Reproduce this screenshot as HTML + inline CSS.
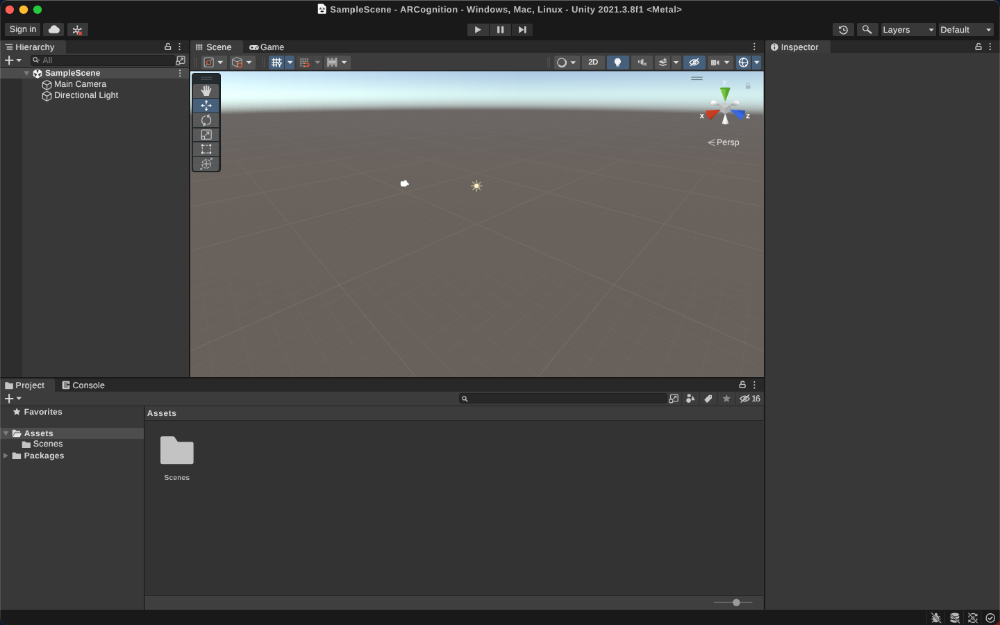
<!DOCTYPE html>
<html lang="en">
<head>
<meta charset="utf-8">
<title>SampleScene - ARCognition - Windows, Mac, Linux - Unity 2021.3.8f1 &lt;Metal&gt;</title>
<style>
*{box-sizing:border-box;margin:0;padding:0}
html,body{width:1000px;height:625px;overflow:hidden;background:#0a1930}
body{font-family:"Liberation Sans",Arial,sans-serif;position:relative;text-rendering:geometricPrecision}
#corner-br{position:absolute;right:0;bottom:0;width:10px;height:10px;background:#7c1d14}
#win{will-change:transform;position:absolute;left:0;top:0;width:1440px;height:900px;transform:scale(0.6944444);transform-origin:0 0;background:#191919;border-radius:10px;overflow:hidden}
#win>div,#win>div>div{position:absolute}
#p-hier,#p-scene,#p-insp,#p-proj{overflow:hidden}
.t{position:absolute;line-height:1;white-space:nowrap;font-size:12px;text-shadow:0 0 .7px currentColor}
.b{font-weight:bold;text-shadow:none}
#ico{position:absolute;left:0;top:0;width:1440px;height:900px;overflow:hidden}
#frame{left:0;top:0;width:1440px;height:900.7px;border:1.6px solid rgba(255,255,255,.15);border-top-color:rgba(255,255,255,.3);border-bottom-color:rgba(255,255,255,.32);border-radius:10px;pointer-events:none}
.tb{background:#383838;border-radius:2px}
.sb{background:#515151;border-radius:2px;top:80.4px;height:19.2px}
.sb.on{background:#46607c}
.sb.dim{background:#464646}
.tool{left:278.2px;width:37.2px;height:19.6px;background:#585858}
</style>
</head>
<body>
<div id="corner-br"></div>
<div id="win">

<!-- ===== main toolbar buttons ===== -->
<div class="tb" style="left:7.2px;top:33.2px;width:50.6px;height:19.2px"></div>
<div class="tb" style="left:62px;top:33.2px;width:30.4px;height:19.2px"></div>
<div class="tb" style="left:96.5px;top:33.2px;width:30.4px;height:19.2px"></div>
<div class="tb" style="left:672.8px;top:34px;width:31px;height:17.6px;border-radius:2px 0 0 2.5px"></div>
<div class="tb" style="left:705.2px;top:34px;width:30.8px;height:17.6px;border-radius:0"></div>
<div class="tb" style="left:737.4px;top:34px;width:29.8px;height:17.6px;border-radius:0 2px 2px 0;background:#2e2e2e"></div>
<div class="tb" style="left:1199px;top:33.4px;width:30.8px;height:18.8px"></div>
<div class="tb" style="left:1234px;top:33.4px;width:30.8px;height:18.8px"></div>
<div class="tb" style="left:1268.6px;top:33.4px;width:79.4px;height:18.8px"></div>
<div class="tb" style="left:1352.2px;top:33.4px;width:79.2px;height:18.8px"></div>

<!-- ===== hierarchy ===== -->
<div id="p-hier" style="left:0;top:58px;width:271.5px;height:484.5px;background:#383838">
  <div style="left:0;top:0;width:271.5px;height:18.5px;background:#282828"></div>
  <div style="left:0;top:0;width:95.3px;height:18.5px;background:#3c3c3c;border-radius:3px 3px 0 0"></div>
  <div style="left:0;top:18.5px;width:271.5px;height:20px;background:#3c3c3c"></div>
  <div style="left:0;top:38.5px;width:271.5px;height:1px;background:#242424"></div>
  <div style="left:44px;top:21.2px;width:208.6px;height:15.4px;background:#262626;border:1px solid #1d1d1d;border-radius:3.5px"></div>
  <div style="left:0;top:39.5px;width:31.6px;height:445px;background:#2d2d2d"></div>
  <div style="left:0;top:39.5px;width:271.5px;height:15.2px;background:#4c4c4c"></div>
</div>

<!-- ===== scene ===== -->
<div id="p-scene" style="left:274px;top:58px;width:825.5px;height:484.7px;background:#3c3c3c">
  <div style="left:0;top:0;width:825.5px;height:18.2px;background:#282828"></div>
  <div style="left:0;top:0;width:76.2px;height:18.2px;background:#3c3c3c;border-radius:3px 3px 0 0"></div>
  <div style="left:0;top:43.4px;width:825.5px;height:1.6px;background:#282828"></div>
  <div id="view" style="left:0;top:45px;width:825.5px;height:439.7px;background:linear-gradient(#6b6563 0,#6b6563 78px,#6a635e 140px,#69615b 270px,#68605a 100%)"></div>
</div>
<svg id="skysvg" viewBox="0 0 1000 625" style="position:absolute;left:0;top:0;width:1440px;height:900px;overflow:hidden">
<defs><clipPath id="vclip"><rect x="190.3" y="71.2" width="573.2" height="305.7"/></clipPath></defs>
<!-- sky: per-column gradients (skybox elevation curves + sun halo) -->
<defs>
<linearGradient id="sky" gradientUnits="userSpaceOnUse" x1="0" x2="0" y1="71.2" y2="110.6">
<stop offset="0.000" stop-color="#acc9e4"/>
<stop offset="0.173" stop-color="#b5d2e7"/>
<stop offset="0.376" stop-color="#c5e2ec"/>
<stop offset="0.566" stop-color="#d4f0f0"/>
<stop offset="0.655" stop-color="#d1ebeb"/>
<stop offset="0.723" stop-color="#cbe2e2"/>
<stop offset="0.782" stop-color="#c1d3d2"/>
<stop offset="0.830" stop-color="#b6c5c4"/>
<stop offset="0.868" stop-color="#aab5b4"/>
<stop offset="0.901" stop-color="#9ca3a2"/>
<stop offset="0.929" stop-color="#8d918f"/>
<stop offset="0.954" stop-color="#7f7f7d"/>
<stop offset="0.977" stop-color="#73706d"/>
<stop offset="1.000" stop-color="#6b6563"/>
</linearGradient>
<linearGradient id="h0" gradientUnits="userSpaceOnUse" x1="0" x2="0" y1="64.66" y2="115.99"><stop offset="0.000" stop-color="#c9e6fb"/><stop offset="0.173" stop-color="#d2effe"/><stop offset="0.376" stop-color="#e2ffff"/><stop offset="0.566" stop-color="#f1ffff"/><stop offset="0.655" stop-color="#ecffff"/><stop offset="0.723" stop-color="#e0f7f3"/><stop offset="0.782" stop-color="#d2e4e0"/><stop offset="0.830" stop-color="#c3d2cf"/><stop offset="0.868" stop-color="#b4bfbc"/><stop offset="0.901" stop-color="#a4aba8"/><stop offset="0.929" stop-color="#939793"/><stop offset="0.954" stop-color="#838380"/><stop offset="0.977" stop-color="#75726e"/><stop offset="1.000" stop-color="#6b6563"/></linearGradient>
<linearGradient id="h1" gradientUnits="userSpaceOnUse" x1="0" x2="0" y1="64.91" y2="115.79"><stop offset="0.000" stop-color="#c8e5fb"/><stop offset="0.173" stop-color="#d1eefe"/><stop offset="0.376" stop-color="#e1feff"/><stop offset="0.566" stop-color="#f0ffff"/><stop offset="0.655" stop-color="#ebffff"/><stop offset="0.723" stop-color="#e0f7f3"/><stop offset="0.782" stop-color="#d2e4df"/><stop offset="0.830" stop-color="#c3d2ce"/><stop offset="0.868" stop-color="#b4bfbc"/><stop offset="0.901" stop-color="#a4aba8"/><stop offset="0.929" stop-color="#929693"/><stop offset="0.954" stop-color="#828280"/><stop offset="0.977" stop-color="#75726e"/><stop offset="1.000" stop-color="#6b6563"/></linearGradient>
<linearGradient id="h2" gradientUnits="userSpaceOnUse" x1="0" x2="0" y1="65.15" y2="115.59"><stop offset="0.000" stop-color="#c8e5fa"/><stop offset="0.173" stop-color="#d1eefd"/><stop offset="0.376" stop-color="#e1feff"/><stop offset="0.566" stop-color="#f0ffff"/><stop offset="0.655" stop-color="#ebffff"/><stop offset="0.723" stop-color="#e0f7f3"/><stop offset="0.782" stop-color="#d1e3df"/><stop offset="0.830" stop-color="#c3d2ce"/><stop offset="0.868" stop-color="#b4bfbc"/><stop offset="0.901" stop-color="#a3aaa8"/><stop offset="0.929" stop-color="#929693"/><stop offset="0.954" stop-color="#828280"/><stop offset="0.977" stop-color="#75726e"/><stop offset="1.000" stop-color="#6b6563"/></linearGradient>
<linearGradient id="h3" gradientUnits="userSpaceOnUse" x1="0" x2="0" y1="65.38" y2="115.39"><stop offset="0.000" stop-color="#c7e4fa"/><stop offset="0.173" stop-color="#d0edfd"/><stop offset="0.376" stop-color="#e0fdff"/><stop offset="0.566" stop-color="#efffff"/><stop offset="0.655" stop-color="#eaffff"/><stop offset="0.723" stop-color="#dff6f2"/><stop offset="0.782" stop-color="#d1e3df"/><stop offset="0.830" stop-color="#c2d1ce"/><stop offset="0.868" stop-color="#b4bfbc"/><stop offset="0.901" stop-color="#a3aaa8"/><stop offset="0.929" stop-color="#929693"/><stop offset="0.954" stop-color="#828280"/><stop offset="0.977" stop-color="#75726e"/><stop offset="1.000" stop-color="#6b6563"/></linearGradient>
<linearGradient id="h4" gradientUnits="userSpaceOnUse" x1="0" x2="0" y1="65.62" y2="115.20"><stop offset="0.000" stop-color="#c7e4f9"/><stop offset="0.173" stop-color="#d0edfc"/><stop offset="0.376" stop-color="#e0fdff"/><stop offset="0.566" stop-color="#efffff"/><stop offset="0.655" stop-color="#eaffff"/><stop offset="0.723" stop-color="#dff6f2"/><stop offset="0.782" stop-color="#d1e3df"/><stop offset="0.830" stop-color="#c2d1ce"/><stop offset="0.868" stop-color="#b3bebc"/><stop offset="0.901" stop-color="#a3aaa8"/><stop offset="0.929" stop-color="#929693"/><stop offset="0.954" stop-color="#828280"/><stop offset="0.977" stop-color="#75726e"/><stop offset="1.000" stop-color="#6b6563"/></linearGradient>
<linearGradient id="h5" gradientUnits="userSpaceOnUse" x1="0" x2="0" y1="65.85" y2="115.01"><stop offset="0.000" stop-color="#c6e3f9"/><stop offset="0.173" stop-color="#cfecfc"/><stop offset="0.376" stop-color="#dffcff"/><stop offset="0.566" stop-color="#eeffff"/><stop offset="0.655" stop-color="#e9fffe"/><stop offset="0.723" stop-color="#dff6f2"/><stop offset="0.782" stop-color="#d0e2de"/><stop offset="0.830" stop-color="#c2d1ce"/><stop offset="0.868" stop-color="#b3bebb"/><stop offset="0.901" stop-color="#a3aaa8"/><stop offset="0.929" stop-color="#929693"/><stop offset="0.954" stop-color="#828280"/><stop offset="0.977" stop-color="#75726e"/><stop offset="1.000" stop-color="#6b6563"/></linearGradient>
<linearGradient id="h6" gradientUnits="userSpaceOnUse" x1="0" x2="0" y1="66.07" y2="114.83"><stop offset="0.000" stop-color="#c6e3f8"/><stop offset="0.173" stop-color="#cfecfb"/><stop offset="0.376" stop-color="#dffcff"/><stop offset="0.566" stop-color="#eeffff"/><stop offset="0.655" stop-color="#e9fffe"/><stop offset="0.723" stop-color="#def5f1"/><stop offset="0.782" stop-color="#d0e2de"/><stop offset="0.830" stop-color="#c2d1cd"/><stop offset="0.868" stop-color="#b3bebb"/><stop offset="0.901" stop-color="#a3aaa7"/><stop offset="0.929" stop-color="#929693"/><stop offset="0.954" stop-color="#828280"/><stop offset="0.977" stop-color="#75726e"/><stop offset="1.000" stop-color="#6b6563"/></linearGradient>
<linearGradient id="h7" gradientUnits="userSpaceOnUse" x1="0" x2="0" y1="66.29" y2="114.64"><stop offset="0.000" stop-color="#c5e2f8"/><stop offset="0.173" stop-color="#ceebfb"/><stop offset="0.376" stop-color="#defbff"/><stop offset="0.566" stop-color="#edffff"/><stop offset="0.655" stop-color="#e8fffe"/><stop offset="0.723" stop-color="#def5f1"/><stop offset="0.782" stop-color="#d0e2de"/><stop offset="0.830" stop-color="#c2d1cd"/><stop offset="0.868" stop-color="#b3bebb"/><stop offset="0.901" stop-color="#a3aaa7"/><stop offset="0.929" stop-color="#929693"/><stop offset="0.954" stop-color="#82827f"/><stop offset="0.977" stop-color="#75726e"/><stop offset="1.000" stop-color="#6b6563"/></linearGradient>
<linearGradient id="h8" gradientUnits="userSpaceOnUse" x1="0" x2="0" y1="66.51" y2="114.46"><stop offset="0.000" stop-color="#c5e2f8"/><stop offset="0.173" stop-color="#ceebfb"/><stop offset="0.376" stop-color="#defbff"/><stop offset="0.566" stop-color="#edffff"/><stop offset="0.655" stop-color="#e8fffd"/><stop offset="0.723" stop-color="#ddf4f1"/><stop offset="0.782" stop-color="#cfe1de"/><stop offset="0.830" stop-color="#c1d0cd"/><stop offset="0.868" stop-color="#b3bebb"/><stop offset="0.901" stop-color="#a3aaa7"/><stop offset="0.929" stop-color="#929693"/><stop offset="0.954" stop-color="#82827f"/><stop offset="0.977" stop-color="#75726e"/><stop offset="1.000" stop-color="#6b6563"/></linearGradient>
<linearGradient id="h9" gradientUnits="userSpaceOnUse" x1="0" x2="0" y1="66.73" y2="114.28"><stop offset="0.000" stop-color="#c4e1f7"/><stop offset="0.173" stop-color="#cdeafa"/><stop offset="0.376" stop-color="#ddfaff"/><stop offset="0.566" stop-color="#ecffff"/><stop offset="0.655" stop-color="#e7fffd"/><stop offset="0.723" stop-color="#ddf4f0"/><stop offset="0.782" stop-color="#cfe1dd"/><stop offset="0.830" stop-color="#c1d0cd"/><stop offset="0.868" stop-color="#b3bebb"/><stop offset="0.901" stop-color="#a2a9a7"/><stop offset="0.929" stop-color="#929693"/><stop offset="0.954" stop-color="#82827f"/><stop offset="0.977" stop-color="#74716e"/><stop offset="1.000" stop-color="#6b6563"/></linearGradient>
<linearGradient id="h10" gradientUnits="userSpaceOnUse" x1="0" x2="0" y1="66.94" y2="114.11"><stop offset="0.000" stop-color="#c4e1f7"/><stop offset="0.173" stop-color="#cdeafa"/><stop offset="0.376" stop-color="#ddfaff"/><stop offset="0.566" stop-color="#ecffff"/><stop offset="0.655" stop-color="#e7fffd"/><stop offset="0.723" stop-color="#ddf4f0"/><stop offset="0.782" stop-color="#cfe1dd"/><stop offset="0.830" stop-color="#c1d0cd"/><stop offset="0.868" stop-color="#b2bdbb"/><stop offset="0.901" stop-color="#a2a9a7"/><stop offset="0.929" stop-color="#929693"/><stop offset="0.954" stop-color="#82827f"/><stop offset="0.977" stop-color="#74716e"/><stop offset="1.000" stop-color="#6b6563"/></linearGradient>
<linearGradient id="h11" gradientUnits="userSpaceOnUse" x1="0" x2="0" y1="67.15" y2="113.94"><stop offset="0.000" stop-color="#c3e0f7"/><stop offset="0.173" stop-color="#cce9fa"/><stop offset="0.376" stop-color="#dcf9ff"/><stop offset="0.566" stop-color="#ebffff"/><stop offset="0.655" stop-color="#e7fffc"/><stop offset="0.723" stop-color="#dcf3f0"/><stop offset="0.782" stop-color="#cfe1dd"/><stop offset="0.830" stop-color="#c1d0cd"/><stop offset="0.868" stop-color="#b2bdbb"/><stop offset="0.901" stop-color="#a2a9a7"/><stop offset="0.929" stop-color="#919593"/><stop offset="0.954" stop-color="#82827f"/><stop offset="0.977" stop-color="#74716e"/><stop offset="1.000" stop-color="#6b6563"/></linearGradient>
<linearGradient id="h12" gradientUnits="userSpaceOnUse" x1="0" x2="0" y1="67.35" y2="113.77"><stop offset="0.000" stop-color="#c3e0f6"/><stop offset="0.173" stop-color="#cce9f9"/><stop offset="0.376" stop-color="#dcf9fe"/><stop offset="0.566" stop-color="#ebffff"/><stop offset="0.655" stop-color="#e6fffc"/><stop offset="0.723" stop-color="#dcf3f0"/><stop offset="0.782" stop-color="#cee0dd"/><stop offset="0.830" stop-color="#c0cfcc"/><stop offset="0.868" stop-color="#b2bdba"/><stop offset="0.901" stop-color="#a2a9a7"/><stop offset="0.929" stop-color="#919592"/><stop offset="0.954" stop-color="#82827f"/><stop offset="0.977" stop-color="#74716e"/><stop offset="1.000" stop-color="#6b6563"/></linearGradient>
<linearGradient id="h13" gradientUnits="userSpaceOnUse" x1="0" x2="0" y1="67.55" y2="113.61"><stop offset="0.000" stop-color="#c2dff6"/><stop offset="0.173" stop-color="#cbe8f9"/><stop offset="0.376" stop-color="#dbf8fe"/><stop offset="0.566" stop-color="#eaffff"/><stop offset="0.655" stop-color="#e6fffc"/><stop offset="0.723" stop-color="#dcf3ef"/><stop offset="0.782" stop-color="#cee0dd"/><stop offset="0.830" stop-color="#c0cfcc"/><stop offset="0.868" stop-color="#b2bdba"/><stop offset="0.901" stop-color="#a2a9a7"/><stop offset="0.929" stop-color="#919592"/><stop offset="0.954" stop-color="#82827f"/><stop offset="0.977" stop-color="#74716e"/><stop offset="1.000" stop-color="#6b6563"/></linearGradient>
<linearGradient id="h14" gradientUnits="userSpaceOnUse" x1="0" x2="0" y1="67.75" y2="113.45"><stop offset="0.000" stop-color="#c2dff5"/><stop offset="0.173" stop-color="#cbe8f8"/><stop offset="0.376" stop-color="#dbf8fd"/><stop offset="0.566" stop-color="#eaffff"/><stop offset="0.655" stop-color="#e5fffb"/><stop offset="0.723" stop-color="#dbf2ef"/><stop offset="0.782" stop-color="#cee0dc"/><stop offset="0.830" stop-color="#c0cfcc"/><stop offset="0.868" stop-color="#b2bdba"/><stop offset="0.901" stop-color="#a2a9a7"/><stop offset="0.929" stop-color="#919592"/><stop offset="0.954" stop-color="#82827f"/><stop offset="0.977" stop-color="#74716e"/><stop offset="1.000" stop-color="#6b6563"/></linearGradient>
<linearGradient id="h15" gradientUnits="userSpaceOnUse" x1="0" x2="0" y1="67.94" y2="113.29"><stop offset="0.000" stop-color="#c1def5"/><stop offset="0.173" stop-color="#cae7f8"/><stop offset="0.376" stop-color="#daf7fd"/><stop offset="0.566" stop-color="#e9ffff"/><stop offset="0.655" stop-color="#e5fffb"/><stop offset="0.723" stop-color="#dbf2ef"/><stop offset="0.782" stop-color="#cee0dc"/><stop offset="0.830" stop-color="#c0cfcc"/><stop offset="0.868" stop-color="#b2bdba"/><stop offset="0.901" stop-color="#a2a9a7"/><stop offset="0.929" stop-color="#919592"/><stop offset="0.954" stop-color="#82827f"/><stop offset="0.977" stop-color="#74716e"/><stop offset="1.000" stop-color="#6b6563"/></linearGradient>
<linearGradient id="h16" gradientUnits="userSpaceOnUse" x1="0" x2="0" y1="68.12" y2="113.13"><stop offset="0.000" stop-color="#c1def5"/><stop offset="0.173" stop-color="#cae7f8"/><stop offset="0.376" stop-color="#daf7fd"/><stop offset="0.566" stop-color="#e9ffff"/><stop offset="0.655" stop-color="#e4fefb"/><stop offset="0.723" stop-color="#dbf2ee"/><stop offset="0.782" stop-color="#cddfdc"/><stop offset="0.830" stop-color="#c0cfcc"/><stop offset="0.868" stop-color="#b1bcba"/><stop offset="0.901" stop-color="#a2a9a6"/><stop offset="0.929" stop-color="#919592"/><stop offset="0.954" stop-color="#82827f"/><stop offset="0.977" stop-color="#74716e"/><stop offset="1.000" stop-color="#6b6563"/></linearGradient>
<linearGradient id="h17" gradientUnits="userSpaceOnUse" x1="0" x2="0" y1="68.31" y2="112.98"><stop offset="0.000" stop-color="#c0ddf4"/><stop offset="0.173" stop-color="#c9e6f7"/><stop offset="0.376" stop-color="#d9f6fc"/><stop offset="0.566" stop-color="#e8ffff"/><stop offset="0.655" stop-color="#e4fefa"/><stop offset="0.723" stop-color="#daf1ee"/><stop offset="0.782" stop-color="#cddfdc"/><stop offset="0.830" stop-color="#bfcecc"/><stop offset="0.868" stop-color="#b1bcba"/><stop offset="0.901" stop-color="#a1a8a6"/><stop offset="0.929" stop-color="#919592"/><stop offset="0.954" stop-color="#82827f"/><stop offset="0.977" stop-color="#74716e"/><stop offset="1.000" stop-color="#6b6563"/></linearGradient>
<linearGradient id="h18" gradientUnits="userSpaceOnUse" x1="0" x2="0" y1="68.48" y2="112.84"><stop offset="0.000" stop-color="#c0ddf4"/><stop offset="0.173" stop-color="#c9e6f7"/><stop offset="0.376" stop-color="#d9f6fc"/><stop offset="0.566" stop-color="#e8ffff"/><stop offset="0.655" stop-color="#e4fefa"/><stop offset="0.723" stop-color="#daf1ee"/><stop offset="0.782" stop-color="#cddfdb"/><stop offset="0.830" stop-color="#bfcecb"/><stop offset="0.868" stop-color="#b1bcba"/><stop offset="0.901" stop-color="#a1a8a6"/><stop offset="0.929" stop-color="#919592"/><stop offset="0.954" stop-color="#81817f"/><stop offset="0.977" stop-color="#74716e"/><stop offset="1.000" stop-color="#6b6563"/></linearGradient>
<linearGradient id="h19" gradientUnits="userSpaceOnUse" x1="0" x2="0" y1="68.66" y2="112.70"><stop offset="0.000" stop-color="#c0ddf4"/><stop offset="0.173" stop-color="#c9e6f7"/><stop offset="0.376" stop-color="#d9f6fc"/><stop offset="0.566" stop-color="#e8ffff"/><stop offset="0.655" stop-color="#e3fdfa"/><stop offset="0.723" stop-color="#daf1ee"/><stop offset="0.782" stop-color="#cddfdb"/><stop offset="0.830" stop-color="#bfcecb"/><stop offset="0.868" stop-color="#b1bcba"/><stop offset="0.901" stop-color="#a1a8a6"/><stop offset="0.929" stop-color="#919592"/><stop offset="0.954" stop-color="#81817f"/><stop offset="0.977" stop-color="#74716e"/><stop offset="1.000" stop-color="#6b6563"/></linearGradient>
<linearGradient id="h20" gradientUnits="userSpaceOnUse" x1="0" x2="0" y1="68.82" y2="112.56"><stop offset="0.000" stop-color="#bfdcf3"/><stop offset="0.173" stop-color="#c8e5f6"/><stop offset="0.376" stop-color="#d8f5fb"/><stop offset="0.566" stop-color="#e7ffff"/><stop offset="0.655" stop-color="#e3fdf9"/><stop offset="0.723" stop-color="#d9f0ed"/><stop offset="0.782" stop-color="#ccdedb"/><stop offset="0.830" stop-color="#bfcecb"/><stop offset="0.868" stop-color="#b1bcb9"/><stop offset="0.901" stop-color="#a1a8a6"/><stop offset="0.929" stop-color="#919592"/><stop offset="0.954" stop-color="#81817f"/><stop offset="0.977" stop-color="#74716e"/><stop offset="1.000" stop-color="#6b6563"/></linearGradient>
<linearGradient id="h21" gradientUnits="userSpaceOnUse" x1="0" x2="0" y1="68.99" y2="112.42"><stop offset="0.000" stop-color="#bfdcf3"/><stop offset="0.173" stop-color="#c8e5f6"/><stop offset="0.376" stop-color="#d8f5fb"/><stop offset="0.566" stop-color="#e7ffff"/><stop offset="0.655" stop-color="#e2fcf9"/><stop offset="0.723" stop-color="#d9f0ed"/><stop offset="0.782" stop-color="#ccdedb"/><stop offset="0.830" stop-color="#bfcecb"/><stop offset="0.868" stop-color="#b1bcb9"/><stop offset="0.901" stop-color="#a1a8a6"/><stop offset="0.929" stop-color="#919592"/><stop offset="0.954" stop-color="#81817f"/><stop offset="0.977" stop-color="#74716e"/><stop offset="1.000" stop-color="#6b6563"/></linearGradient>
<linearGradient id="h22" gradientUnits="userSpaceOnUse" x1="0" x2="0" y1="69.14" y2="112.29"><stop offset="0.000" stop-color="#bedbf3"/><stop offset="0.173" stop-color="#c7e4f6"/><stop offset="0.376" stop-color="#d7f4fb"/><stop offset="0.566" stop-color="#e6ffff"/><stop offset="0.655" stop-color="#e2fcf9"/><stop offset="0.723" stop-color="#d9f0ed"/><stop offset="0.782" stop-color="#ccdedb"/><stop offset="0.830" stop-color="#becdcb"/><stop offset="0.868" stop-color="#b0bbb9"/><stop offset="0.901" stop-color="#a1a8a6"/><stop offset="0.929" stop-color="#909492"/><stop offset="0.954" stop-color="#81817f"/><stop offset="0.977" stop-color="#74716e"/><stop offset="1.000" stop-color="#6b6563"/></linearGradient>
<linearGradient id="h23" gradientUnits="userSpaceOnUse" x1="0" x2="0" y1="69.30" y2="112.17"><stop offset="0.000" stop-color="#bedbf2"/><stop offset="0.173" stop-color="#c7e4f5"/><stop offset="0.376" stop-color="#d7f4fa"/><stop offset="0.566" stop-color="#e6fffe"/><stop offset="0.655" stop-color="#e1fbf8"/><stop offset="0.723" stop-color="#d8efed"/><stop offset="0.782" stop-color="#cbddda"/><stop offset="0.830" stop-color="#becdca"/><stop offset="0.868" stop-color="#b0bbb9"/><stop offset="0.901" stop-color="#a1a8a6"/><stop offset="0.929" stop-color="#909492"/><stop offset="0.954" stop-color="#81817f"/><stop offset="0.977" stop-color="#74716e"/><stop offset="1.000" stop-color="#6b6563"/></linearGradient>
<linearGradient id="h24" gradientUnits="userSpaceOnUse" x1="0" x2="0" y1="69.45" y2="112.05"><stop offset="0.000" stop-color="#bddaf2"/><stop offset="0.173" stop-color="#c6e3f5"/><stop offset="0.376" stop-color="#d6f3fa"/><stop offset="0.566" stop-color="#e5fffe"/><stop offset="0.655" stop-color="#e1fbf8"/><stop offset="0.723" stop-color="#d8efec"/><stop offset="0.782" stop-color="#cbddda"/><stop offset="0.830" stop-color="#becdca"/><stop offset="0.868" stop-color="#b0bbb9"/><stop offset="0.901" stop-color="#a1a8a6"/><stop offset="0.929" stop-color="#909492"/><stop offset="0.954" stop-color="#81817f"/><stop offset="0.977" stop-color="#74716e"/><stop offset="1.000" stop-color="#6b6563"/></linearGradient>
<linearGradient id="h25" gradientUnits="userSpaceOnUse" x1="0" x2="0" y1="69.59" y2="111.93"><stop offset="0.000" stop-color="#bddaf1"/><stop offset="0.173" stop-color="#c6e3f4"/><stop offset="0.376" stop-color="#d6f3f9"/><stop offset="0.566" stop-color="#e5fffd"/><stop offset="0.655" stop-color="#e1fbf7"/><stop offset="0.723" stop-color="#d7eeec"/><stop offset="0.782" stop-color="#cbddda"/><stop offset="0.830" stop-color="#becdca"/><stop offset="0.868" stop-color="#b0bbb9"/><stop offset="0.901" stop-color="#a0a7a6"/><stop offset="0.929" stop-color="#909492"/><stop offset="0.954" stop-color="#81817f"/><stop offset="0.977" stop-color="#74716e"/><stop offset="1.000" stop-color="#6b6563"/></linearGradient>
<linearGradient id="h26" gradientUnits="userSpaceOnUse" x1="0" x2="0" y1="69.72" y2="111.82"><stop offset="0.000" stop-color="#bcd9f1"/><stop offset="0.173" stop-color="#c5e2f4"/><stop offset="0.376" stop-color="#d5f2f9"/><stop offset="0.566" stop-color="#e4fffd"/><stop offset="0.655" stop-color="#e0faf7"/><stop offset="0.723" stop-color="#d7eeec"/><stop offset="0.782" stop-color="#cadcda"/><stop offset="0.830" stop-color="#bdccca"/><stop offset="0.868" stop-color="#b0bbb9"/><stop offset="0.901" stop-color="#a0a7a5"/><stop offset="0.929" stop-color="#909491"/><stop offset="0.954" stop-color="#81817f"/><stop offset="0.977" stop-color="#74716e"/><stop offset="1.000" stop-color="#6b6563"/></linearGradient>
<linearGradient id="h27" gradientUnits="userSpaceOnUse" x1="0" x2="0" y1="69.86" y2="111.71"><stop offset="0.000" stop-color="#bcd8f0"/><stop offset="0.173" stop-color="#c4e2f3"/><stop offset="0.376" stop-color="#d4f2f8"/><stop offset="0.566" stop-color="#e4fffc"/><stop offset="0.655" stop-color="#dff9f7"/><stop offset="0.723" stop-color="#d7eeeb"/><stop offset="0.782" stop-color="#cadcd9"/><stop offset="0.830" stop-color="#bdccca"/><stop offset="0.868" stop-color="#b0bbb8"/><stop offset="0.901" stop-color="#a0a7a5"/><stop offset="0.929" stop-color="#909491"/><stop offset="0.954" stop-color="#81817f"/><stop offset="0.977" stop-color="#74716e"/><stop offset="1.000" stop-color="#6b6563"/></linearGradient>
<linearGradient id="h28" gradientUnits="userSpaceOnUse" x1="0" x2="0" y1="69.98" y2="111.60"><stop offset="0.000" stop-color="#bbd8f0"/><stop offset="0.173" stop-color="#c4e1f3"/><stop offset="0.376" stop-color="#d4f1f8"/><stop offset="0.566" stop-color="#e3fffc"/><stop offset="0.655" stop-color="#dff9f6"/><stop offset="0.723" stop-color="#d6edeb"/><stop offset="0.782" stop-color="#cadcd9"/><stop offset="0.830" stop-color="#bdccc9"/><stop offset="0.868" stop-color="#afbab8"/><stop offset="0.901" stop-color="#a0a7a5"/><stop offset="0.929" stop-color="#909491"/><stop offset="0.954" stop-color="#81817e"/><stop offset="0.977" stop-color="#74716e"/><stop offset="1.000" stop-color="#6b6563"/></linearGradient>
<linearGradient id="h29" gradientUnits="userSpaceOnUse" x1="0" x2="0" y1="70.10" y2="111.51"><stop offset="0.000" stop-color="#bad7ef"/><stop offset="0.173" stop-color="#c3e0f2"/><stop offset="0.376" stop-color="#d3f0f7"/><stop offset="0.566" stop-color="#e2fefb"/><stop offset="0.655" stop-color="#def8f6"/><stop offset="0.723" stop-color="#d6edeb"/><stop offset="0.782" stop-color="#c9dbd9"/><stop offset="0.830" stop-color="#bdccc9"/><stop offset="0.868" stop-color="#afbab8"/><stop offset="0.901" stop-color="#a0a7a5"/><stop offset="0.929" stop-color="#909491"/><stop offset="0.954" stop-color="#81817e"/><stop offset="0.977" stop-color="#74716e"/><stop offset="1.000" stop-color="#6b6563"/></linearGradient>
<linearGradient id="h30" gradientUnits="userSpaceOnUse" x1="0" x2="0" y1="70.22" y2="111.41"><stop offset="0.000" stop-color="#bad7ef"/><stop offset="0.173" stop-color="#c3e0f2"/><stop offset="0.376" stop-color="#d3f0f7"/><stop offset="0.566" stop-color="#e2fefb"/><stop offset="0.655" stop-color="#def8f5"/><stop offset="0.723" stop-color="#d5ecea"/><stop offset="0.782" stop-color="#c9dbd8"/><stop offset="0.830" stop-color="#bccbc9"/><stop offset="0.868" stop-color="#afbab8"/><stop offset="0.901" stop-color="#a0a7a5"/><stop offset="0.929" stop-color="#909491"/><stop offset="0.954" stop-color="#81817e"/><stop offset="0.977" stop-color="#74716e"/><stop offset="1.000" stop-color="#6b6563"/></linearGradient>
<linearGradient id="h31" gradientUnits="userSpaceOnUse" x1="0" x2="0" y1="70.32" y2="111.32"><stop offset="0.000" stop-color="#b9d6ee"/><stop offset="0.173" stop-color="#c2dff1"/><stop offset="0.376" stop-color="#d2eff6"/><stop offset="0.566" stop-color="#e1fdfa"/><stop offset="0.655" stop-color="#ddf7f5"/><stop offset="0.723" stop-color="#d5ecea"/><stop offset="0.782" stop-color="#c9dbd8"/><stop offset="0.830" stop-color="#bccbc9"/><stop offset="0.868" stop-color="#afbab8"/><stop offset="0.901" stop-color="#9fa6a5"/><stop offset="0.929" stop-color="#909491"/><stop offset="0.954" stop-color="#81817e"/><stop offset="0.977" stop-color="#74716e"/><stop offset="1.000" stop-color="#6b6563"/></linearGradient>
<linearGradient id="h32" gradientUnits="userSpaceOnUse" x1="0" x2="0" y1="70.43" y2="111.24"><stop offset="0.000" stop-color="#b8d6ee"/><stop offset="0.173" stop-color="#c2def1"/><stop offset="0.376" stop-color="#d2eef6"/><stop offset="0.566" stop-color="#e0fcfa"/><stop offset="0.655" stop-color="#ddf7f4"/><stop offset="0.723" stop-color="#d4ebe9"/><stop offset="0.782" stop-color="#c8dad8"/><stop offset="0.830" stop-color="#bccbc9"/><stop offset="0.868" stop-color="#aeb9b8"/><stop offset="0.901" stop-color="#9fa6a5"/><stop offset="0.929" stop-color="#8f9391"/><stop offset="0.954" stop-color="#81817e"/><stop offset="0.977" stop-color="#74716e"/><stop offset="1.000" stop-color="#6b6563"/></linearGradient>
<linearGradient id="h33" gradientUnits="userSpaceOnUse" x1="0" x2="0" y1="70.52" y2="111.16"><stop offset="0.000" stop-color="#b8d5ee"/><stop offset="0.173" stop-color="#c1def1"/><stop offset="0.376" stop-color="#d1eef6"/><stop offset="0.566" stop-color="#e0fcfa"/><stop offset="0.655" stop-color="#dcf6f4"/><stop offset="0.723" stop-color="#d4ebe9"/><stop offset="0.782" stop-color="#c8dad8"/><stop offset="0.830" stop-color="#bbcac8"/><stop offset="0.868" stop-color="#aeb9b7"/><stop offset="0.901" stop-color="#9fa6a5"/><stop offset="0.929" stop-color="#8f9391"/><stop offset="0.954" stop-color="#80807e"/><stop offset="0.977" stop-color="#74716e"/><stop offset="1.000" stop-color="#6b6563"/></linearGradient>
<linearGradient id="h34" gradientUnits="userSpaceOnUse" x1="0" x2="0" y1="70.61" y2="111.08"><stop offset="0.000" stop-color="#b7d4ed"/><stop offset="0.173" stop-color="#c0ddf0"/><stop offset="0.376" stop-color="#d0edf5"/><stop offset="0.566" stop-color="#dffbf9"/><stop offset="0.655" stop-color="#dcf6f3"/><stop offset="0.723" stop-color="#d3eae9"/><stop offset="0.782" stop-color="#c8dad7"/><stop offset="0.830" stop-color="#bbcac8"/><stop offset="0.868" stop-color="#aeb9b7"/><stop offset="0.901" stop-color="#9fa6a4"/><stop offset="0.929" stop-color="#8f9391"/><stop offset="0.954" stop-color="#80807e"/><stop offset="0.977" stop-color="#74716e"/><stop offset="1.000" stop-color="#6b6563"/></linearGradient>
<linearGradient id="h35" gradientUnits="userSpaceOnUse" x1="0" x2="0" y1="70.70" y2="111.01"><stop offset="0.000" stop-color="#b7d4ed"/><stop offset="0.173" stop-color="#c0ddf0"/><stop offset="0.376" stop-color="#d0edf5"/><stop offset="0.566" stop-color="#dffbf9"/><stop offset="0.655" stop-color="#dbf5f3"/><stop offset="0.723" stop-color="#d3eae8"/><stop offset="0.782" stop-color="#c7d9d7"/><stop offset="0.830" stop-color="#bbcac8"/><stop offset="0.868" stop-color="#aeb9b7"/><stop offset="0.901" stop-color="#9fa6a4"/><stop offset="0.929" stop-color="#8f9391"/><stop offset="0.954" stop-color="#80807e"/><stop offset="0.977" stop-color="#74716e"/><stop offset="1.000" stop-color="#6b6563"/></linearGradient>
<linearGradient id="h36" gradientUnits="userSpaceOnUse" x1="0" x2="0" y1="70.77" y2="110.95"><stop offset="0.000" stop-color="#b6d3ec"/><stop offset="0.173" stop-color="#bfdcef"/><stop offset="0.376" stop-color="#cfecf4"/><stop offset="0.566" stop-color="#defaf8"/><stop offset="0.655" stop-color="#daf4f3"/><stop offset="0.723" stop-color="#d3eae8"/><stop offset="0.782" stop-color="#c7d9d7"/><stop offset="0.830" stop-color="#bbcac8"/><stop offset="0.868" stop-color="#aeb9b7"/><stop offset="0.901" stop-color="#9fa6a4"/><stop offset="0.929" stop-color="#8f9391"/><stop offset="0.954" stop-color="#80807e"/><stop offset="0.977" stop-color="#74716d"/><stop offset="1.000" stop-color="#6b6563"/></linearGradient>
<linearGradient id="h37" gradientUnits="userSpaceOnUse" x1="0" x2="0" y1="70.85" y2="110.89"><stop offset="0.000" stop-color="#b6d2ec"/><stop offset="0.173" stop-color="#bedcef"/><stop offset="0.376" stop-color="#ceecf4"/><stop offset="0.566" stop-color="#defaf8"/><stop offset="0.655" stop-color="#daf4f2"/><stop offset="0.723" stop-color="#d2e9e8"/><stop offset="0.782" stop-color="#c7d9d6"/><stop offset="0.830" stop-color="#bac9c7"/><stop offset="0.868" stop-color="#adb8b7"/><stop offset="0.901" stop-color="#9fa6a4"/><stop offset="0.929" stop-color="#8f9390"/><stop offset="0.954" stop-color="#80807e"/><stop offset="0.977" stop-color="#74716d"/><stop offset="1.000" stop-color="#6b6563"/></linearGradient>
<linearGradient id="h38" gradientUnits="userSpaceOnUse" x1="0" x2="0" y1="70.91" y2="110.84"><stop offset="0.000" stop-color="#b5d2eb"/><stop offset="0.173" stop-color="#bedbee"/><stop offset="0.376" stop-color="#ceebf3"/><stop offset="0.566" stop-color="#ddf9f7"/><stop offset="0.655" stop-color="#d9f3f2"/><stop offset="0.723" stop-color="#d2e9e7"/><stop offset="0.782" stop-color="#c6d8d6"/><stop offset="0.830" stop-color="#bac9c7"/><stop offset="0.868" stop-color="#adb8b7"/><stop offset="0.901" stop-color="#9ea5a4"/><stop offset="0.929" stop-color="#8f9390"/><stop offset="0.954" stop-color="#80807e"/><stop offset="0.977" stop-color="#74716d"/><stop offset="1.000" stop-color="#6b6563"/></linearGradient>
<linearGradient id="h39" gradientUnits="userSpaceOnUse" x1="0" x2="0" y1="70.97" y2="110.79"><stop offset="0.000" stop-color="#b4d1eb"/><stop offset="0.173" stop-color="#bddaee"/><stop offset="0.376" stop-color="#cdeaf3"/><stop offset="0.566" stop-color="#dcf8f7"/><stop offset="0.655" stop-color="#d9f3f1"/><stop offset="0.723" stop-color="#d1e8e7"/><stop offset="0.782" stop-color="#c6d8d6"/><stop offset="0.830" stop-color="#bac9c7"/><stop offset="0.868" stop-color="#adb8b6"/><stop offset="0.901" stop-color="#9ea5a4"/><stop offset="0.929" stop-color="#8f9390"/><stop offset="0.954" stop-color="#80807e"/><stop offset="0.977" stop-color="#74716d"/><stop offset="1.000" stop-color="#6b6563"/></linearGradient>
<linearGradient id="h40" gradientUnits="userSpaceOnUse" x1="0" x2="0" y1="71.02" y2="110.75"><stop offset="0.000" stop-color="#b4d1ea"/><stop offset="0.173" stop-color="#bddaed"/><stop offset="0.376" stop-color="#cdeaf2"/><stop offset="0.566" stop-color="#dcf8f6"/><stop offset="0.655" stop-color="#d8f2f1"/><stop offset="0.723" stop-color="#d1e8e7"/><stop offset="0.782" stop-color="#c6d8d6"/><stop offset="0.830" stop-color="#bac9c7"/><stop offset="0.868" stop-color="#adb8b6"/><stop offset="0.901" stop-color="#9ea5a4"/><stop offset="0.929" stop-color="#8e9290"/><stop offset="0.954" stop-color="#80807e"/><stop offset="0.977" stop-color="#73706d"/><stop offset="1.000" stop-color="#6b6563"/></linearGradient>
<linearGradient id="h41" gradientUnits="userSpaceOnUse" x1="0" x2="0" y1="71.07" y2="110.71"><stop offset="0.000" stop-color="#b3d0ea"/><stop offset="0.173" stop-color="#bcd9ed"/><stop offset="0.376" stop-color="#cce9f2"/><stop offset="0.566" stop-color="#dbf7f6"/><stop offset="0.655" stop-color="#d8f2f0"/><stop offset="0.723" stop-color="#d0e7e6"/><stop offset="0.782" stop-color="#c5d7d5"/><stop offset="0.830" stop-color="#b9c8c7"/><stop offset="0.868" stop-color="#adb8b6"/><stop offset="0.901" stop-color="#9ea5a4"/><stop offset="0.929" stop-color="#8e9290"/><stop offset="0.954" stop-color="#80807e"/><stop offset="0.977" stop-color="#73706d"/><stop offset="1.000" stop-color="#6b6563"/></linearGradient>
<linearGradient id="h42" gradientUnits="userSpaceOnUse" x1="0" x2="0" y1="71.11" y2="110.68"><stop offset="0.000" stop-color="#b3d0e9"/><stop offset="0.173" stop-color="#bcd9ec"/><stop offset="0.376" stop-color="#cce9f1"/><stop offset="0.566" stop-color="#dbf7f5"/><stop offset="0.655" stop-color="#d7f1f0"/><stop offset="0.723" stop-color="#d0e7e6"/><stop offset="0.782" stop-color="#c5d7d5"/><stop offset="0.830" stop-color="#b9c8c6"/><stop offset="0.868" stop-color="#acb7b6"/><stop offset="0.901" stop-color="#9ea5a3"/><stop offset="0.929" stop-color="#8e9290"/><stop offset="0.954" stop-color="#80807e"/><stop offset="0.977" stop-color="#73706d"/><stop offset="1.000" stop-color="#6b6563"/></linearGradient>
<linearGradient id="h43" gradientUnits="userSpaceOnUse" x1="0" x2="0" y1="71.14" y2="110.65"><stop offset="0.000" stop-color="#b2cfe9"/><stop offset="0.173" stop-color="#bbd8ec"/><stop offset="0.376" stop-color="#cbe8f1"/><stop offset="0.566" stop-color="#daf6f5"/><stop offset="0.655" stop-color="#d7f1ef"/><stop offset="0.723" stop-color="#d0e7e6"/><stop offset="0.782" stop-color="#c5d7d5"/><stop offset="0.830" stop-color="#b9c8c6"/><stop offset="0.868" stop-color="#acb7b6"/><stop offset="0.901" stop-color="#9ea5a3"/><stop offset="0.929" stop-color="#8e9290"/><stop offset="0.954" stop-color="#80807e"/><stop offset="0.977" stop-color="#73706d"/><stop offset="1.000" stop-color="#6b6563"/></linearGradient>
<linearGradient id="h44" gradientUnits="userSpaceOnUse" x1="0" x2="0" y1="71.16" y2="110.63"><stop offset="0.000" stop-color="#b2cfe8"/><stop offset="0.173" stop-color="#bbd8eb"/><stop offset="0.376" stop-color="#cbe8f0"/><stop offset="0.566" stop-color="#daf6f4"/><stop offset="0.655" stop-color="#d6f0ef"/><stop offset="0.723" stop-color="#cfe6e5"/><stop offset="0.782" stop-color="#c4d6d5"/><stop offset="0.830" stop-color="#b9c8c6"/><stop offset="0.868" stop-color="#acb7b6"/><stop offset="0.901" stop-color="#9da4a3"/><stop offset="0.929" stop-color="#8e9290"/><stop offset="0.954" stop-color="#80807e"/><stop offset="0.977" stop-color="#73706d"/><stop offset="1.000" stop-color="#6b6563"/></linearGradient>
<linearGradient id="h45" gradientUnits="userSpaceOnUse" x1="0" x2="0" y1="71.18" y2="110.61"><stop offset="0.000" stop-color="#b1cee8"/><stop offset="0.173" stop-color="#bad7eb"/><stop offset="0.376" stop-color="#cae7f0"/><stop offset="0.566" stop-color="#d9f5f4"/><stop offset="0.655" stop-color="#d6f0ef"/><stop offset="0.723" stop-color="#cfe6e5"/><stop offset="0.782" stop-color="#c4d6d4"/><stop offset="0.830" stop-color="#b8c7c6"/><stop offset="0.868" stop-color="#acb7b5"/><stop offset="0.901" stop-color="#9da4a3"/><stop offset="0.929" stop-color="#8e9290"/><stop offset="0.954" stop-color="#80807d"/><stop offset="0.977" stop-color="#73706d"/><stop offset="1.000" stop-color="#6b6563"/></linearGradient>
<linearGradient id="h46" gradientUnits="userSpaceOnUse" x1="0" x2="0" y1="71.19" y2="110.60"><stop offset="0.000" stop-color="#b0cde8"/><stop offset="0.173" stop-color="#b9d6eb"/><stop offset="0.376" stop-color="#c9e6f0"/><stop offset="0.566" stop-color="#d8f4f4"/><stop offset="0.655" stop-color="#d5efee"/><stop offset="0.723" stop-color="#cee5e5"/><stop offset="0.782" stop-color="#c4d6d4"/><stop offset="0.830" stop-color="#b8c7c6"/><stop offset="0.868" stop-color="#acb7b5"/><stop offset="0.901" stop-color="#9da4a3"/><stop offset="0.929" stop-color="#8e9290"/><stop offset="0.954" stop-color="#80807d"/><stop offset="0.977" stop-color="#73706d"/><stop offset="1.000" stop-color="#6b6563"/></linearGradient>
<linearGradient id="h47" gradientUnits="userSpaceOnUse" x1="0" x2="0" y1="71.20" y2="110.60"><stop offset="0.000" stop-color="#b0cde7"/><stop offset="0.173" stop-color="#b9d6ea"/><stop offset="0.376" stop-color="#c9e6ef"/><stop offset="0.566" stop-color="#d8f4f3"/><stop offset="0.655" stop-color="#d5efee"/><stop offset="0.723" stop-color="#cee5e4"/><stop offset="0.782" stop-color="#c3d5d4"/><stop offset="0.830" stop-color="#b8c7c5"/><stop offset="0.868" stop-color="#abb6b5"/><stop offset="0.901" stop-color="#9da4a3"/><stop offset="0.929" stop-color="#8e9290"/><stop offset="0.954" stop-color="#7f7f7d"/><stop offset="0.977" stop-color="#73706d"/><stop offset="1.000" stop-color="#6b6563"/></linearGradient>
<linearGradient id="h48" gradientUnits="userSpaceOnUse" x1="0" x2="0" y1="71.20" y2="110.60"><stop offset="0.000" stop-color="#afcce7"/><stop offset="0.173" stop-color="#b8d5ea"/><stop offset="0.376" stop-color="#c8e5ef"/><stop offset="0.566" stop-color="#d7f3f3"/><stop offset="0.655" stop-color="#d4eeee"/><stop offset="0.723" stop-color="#cee5e4"/><stop offset="0.782" stop-color="#c3d5d4"/><stop offset="0.830" stop-color="#b8c7c5"/><stop offset="0.868" stop-color="#abb6b5"/><stop offset="0.901" stop-color="#9da4a3"/><stop offset="0.929" stop-color="#8e9290"/><stop offset="0.954" stop-color="#7f7f7d"/><stop offset="0.977" stop-color="#73706d"/><stop offset="1.000" stop-color="#6b6563"/></linearGradient>
<linearGradient id="h49" gradientUnits="userSpaceOnUse" x1="0" x2="0" y1="71.19" y2="110.61"><stop offset="0.000" stop-color="#afcce6"/><stop offset="0.173" stop-color="#b8d5e9"/><stop offset="0.376" stop-color="#c8e5ee"/><stop offset="0.566" stop-color="#d7f3f2"/><stop offset="0.655" stop-color="#d4eeed"/><stop offset="0.723" stop-color="#cde4e4"/><stop offset="0.782" stop-color="#c3d5d3"/><stop offset="0.830" stop-color="#b7c6c5"/><stop offset="0.868" stop-color="#abb6b5"/><stop offset="0.901" stop-color="#9da4a3"/><stop offset="0.929" stop-color="#8e928f"/><stop offset="0.954" stop-color="#7f7f7d"/><stop offset="0.977" stop-color="#73706d"/><stop offset="1.000" stop-color="#6b6563"/></linearGradient>
<linearGradient id="h50" gradientUnits="userSpaceOnUse" x1="0" x2="0" y1="71.18" y2="110.62"><stop offset="0.000" stop-color="#aecbe6"/><stop offset="0.173" stop-color="#b7d4e9"/><stop offset="0.376" stop-color="#c7e4ee"/><stop offset="0.566" stop-color="#d6f2f2"/><stop offset="0.655" stop-color="#d3eded"/><stop offset="0.723" stop-color="#cde4e3"/><stop offset="0.782" stop-color="#c2d4d3"/><stop offset="0.830" stop-color="#b7c6c5"/><stop offset="0.868" stop-color="#abb6b5"/><stop offset="0.901" stop-color="#9da4a3"/><stop offset="0.929" stop-color="#8d918f"/><stop offset="0.954" stop-color="#7f7f7d"/><stop offset="0.977" stop-color="#73706d"/><stop offset="1.000" stop-color="#6b6563"/></linearGradient>
<linearGradient id="h51" gradientUnits="userSpaceOnUse" x1="0" x2="0" y1="71.15" y2="110.64"><stop offset="0.000" stop-color="#aecbe5"/><stop offset="0.173" stop-color="#b7d4e8"/><stop offset="0.376" stop-color="#c7e4ed"/><stop offset="0.566" stop-color="#d6f2f1"/><stop offset="0.655" stop-color="#d3edec"/><stop offset="0.723" stop-color="#cce3e3"/><stop offset="0.782" stop-color="#c2d4d3"/><stop offset="0.830" stop-color="#b7c6c5"/><stop offset="0.868" stop-color="#abb6b5"/><stop offset="0.901" stop-color="#9ca3a2"/><stop offset="0.929" stop-color="#8d918f"/><stop offset="0.954" stop-color="#7f7f7d"/><stop offset="0.977" stop-color="#73706d"/><stop offset="1.000" stop-color="#6b6563"/></linearGradient>
<linearGradient id="h52" gradientUnits="userSpaceOnUse" x1="0" x2="0" y1="71.13" y2="110.66"><stop offset="0.000" stop-color="#adcae5"/><stop offset="0.173" stop-color="#b6d3e8"/><stop offset="0.376" stop-color="#c6e3ed"/><stop offset="0.566" stop-color="#d5f1f1"/><stop offset="0.655" stop-color="#d2ecec"/><stop offset="0.723" stop-color="#cce3e3"/><stop offset="0.782" stop-color="#c2d4d3"/><stop offset="0.830" stop-color="#b7c6c4"/><stop offset="0.868" stop-color="#aab5b4"/><stop offset="0.901" stop-color="#9ca3a2"/><stop offset="0.929" stop-color="#8d918f"/><stop offset="0.954" stop-color="#7f7f7d"/><stop offset="0.977" stop-color="#73706d"/><stop offset="1.000" stop-color="#6b6563"/></linearGradient>
<linearGradient id="h53" gradientUnits="userSpaceOnUse" x1="0" x2="0" y1="71.09" y2="110.69"><stop offset="0.000" stop-color="#adcae5"/><stop offset="0.173" stop-color="#b6d3e8"/><stop offset="0.376" stop-color="#c6e3ed"/><stop offset="0.566" stop-color="#d5f1f1"/><stop offset="0.655" stop-color="#d2ecec"/><stop offset="0.723" stop-color="#cce3e2"/><stop offset="0.782" stop-color="#c1d3d2"/><stop offset="0.830" stop-color="#b6c5c4"/><stop offset="0.868" stop-color="#aab5b4"/><stop offset="0.901" stop-color="#9ca3a2"/><stop offset="0.929" stop-color="#8d918f"/><stop offset="0.954" stop-color="#7f7f7d"/><stop offset="0.977" stop-color="#73706d"/><stop offset="1.000" stop-color="#6b6563"/></linearGradient>
<linearGradient id="s13" href="#sky" y1="71.05" y2="110.72"/>
<linearGradient id="s15" href="#sky" y1="71.00" y2="110.76"/>
<linearGradient id="s17" href="#sky" y1="70.95" y2="110.81"/>
<linearGradient id="s19" href="#sky" y1="70.89" y2="110.86"/>
<linearGradient id="s21" href="#sky" y1="70.82" y2="110.91"/>
<linearGradient id="s23" href="#sky" y1="70.74" y2="110.98"/>
<linearGradient id="s25" href="#sky" y1="70.66" y2="111.04"/>
<linearGradient id="s27" href="#sky" y1="70.58" y2="111.11"/>
<linearGradient id="s29" href="#sky" y1="70.49" y2="111.19"/>
<linearGradient id="s31" href="#sky" y1="70.39" y2="111.27"/>
<linearGradient id="s33" href="#sky" y1="70.28" y2="111.36"/>
<linearGradient id="s35" href="#sky" y1="70.17" y2="111.45"/>
<linearGradient id="s37" href="#sky" y1="70.05" y2="111.54"/>
<linearGradient id="s39" href="#sky" y1="69.93" y2="111.64"/>
<linearGradient id="s41" href="#sky" y1="69.80" y2="111.75"/>
<linearGradient id="s43" href="#sky" y1="69.67" y2="111.86"/>
<linearGradient id="s45" href="#sky" y1="69.53" y2="111.98"/>
<linearGradient id="s47" href="#sky" y1="69.39" y2="112.09"/>
<linearGradient id="s49" href="#sky" y1="69.24" y2="112.22"/>
<linearGradient id="s51" href="#sky" y1="69.08" y2="112.35"/>
<linearGradient id="s53" href="#sky" y1="68.92" y2="112.48"/>
<linearGradient id="s55" href="#sky" y1="68.76" y2="112.61"/>
<linearGradient id="s57" href="#sky" y1="68.59" y2="112.75"/>
<linearGradient id="s59" href="#sky" y1="68.41" y2="112.90"/>
<linearGradient id="s61" href="#sky" y1="68.23" y2="113.04"/>
<linearGradient id="s63" href="#sky" y1="68.05" y2="113.20"/>
<linearGradient id="s65" href="#sky" y1="67.86" y2="113.35"/>
<linearGradient id="s67" href="#sky" y1="67.67" y2="113.51"/>
<linearGradient id="s69" href="#sky" y1="67.47" y2="113.67"/>
<linearGradient id="s71" href="#sky" y1="67.27" y2="113.84"/>
<linearGradient id="s73" href="#sky" y1="67.07" y2="114.01"/>
<linearGradient id="s75" href="#sky" y1="66.86" y2="114.18"/>
<linearGradient id="s77" href="#sky" y1="66.64" y2="114.35"/>
<linearGradient id="s79" href="#sky" y1="66.43" y2="114.53"/>
<linearGradient id="s81" href="#sky" y1="66.21" y2="114.72"/>
<linearGradient id="s83" href="#sky" y1="65.98" y2="114.90"/>
<linearGradient id="s85" href="#sky" y1="65.75" y2="115.09"/>
<linearGradient id="s87" href="#sky" y1="65.52" y2="115.28"/>
<linearGradient id="s89" href="#sky" y1="65.29" y2="115.47"/>
<linearGradient id="s91" href="#sky" y1="65.05" y2="115.67"/>
<linearGradient id="s93" href="#sky" y1="64.81" y2="115.87"/>
<linearGradient id="s95" href="#sky" y1="64.57" y2="116.07"/>
</defs>
<g clip-path="url(#vclip)" shape-rendering="crispEdges">
<rect x="190" y="71" width="6" height="56" fill="url(#h0)"/>
<rect x="196" y="71" width="6" height="56" fill="url(#h1)"/>
<rect x="202" y="71" width="6" height="56" fill="url(#h2)"/>
<rect x="208" y="71" width="6" height="56" fill="url(#h3)"/>
<rect x="214" y="71" width="6" height="56" fill="url(#h4)"/>
<rect x="220" y="71" width="6" height="56" fill="url(#h5)"/>
<rect x="226" y="71" width="6" height="56" fill="url(#h6)"/>
<rect x="232" y="71" width="6" height="56" fill="url(#h7)"/>
<rect x="238" y="71" width="6" height="56" fill="url(#h8)"/>
<rect x="244" y="71" width="6" height="56" fill="url(#h9)"/>
<rect x="250" y="71" width="6" height="56" fill="url(#h10)"/>
<rect x="256" y="71" width="6" height="56" fill="url(#h11)"/>
<rect x="262" y="71" width="6" height="56" fill="url(#h12)"/>
<rect x="268" y="71" width="6" height="56" fill="url(#h13)"/>
<rect x="274" y="71" width="6" height="56" fill="url(#h14)"/>
<rect x="280" y="71" width="6" height="56" fill="url(#h15)"/>
<rect x="286" y="71" width="6" height="56" fill="url(#h16)"/>
<rect x="292" y="71" width="6" height="56" fill="url(#h17)"/>
<rect x="298" y="71" width="6" height="56" fill="url(#h18)"/>
<rect x="304" y="71" width="6" height="56" fill="url(#h19)"/>
<rect x="310" y="71" width="6" height="56" fill="url(#h20)"/>
<rect x="316" y="71" width="6" height="56" fill="url(#h21)"/>
<rect x="322" y="71" width="6" height="56" fill="url(#h22)"/>
<rect x="328" y="71" width="6" height="56" fill="url(#h23)"/>
<rect x="334" y="71" width="6" height="56" fill="url(#h24)"/>
<rect x="340" y="71" width="6" height="56" fill="url(#h25)"/>
<rect x="346" y="71" width="6" height="56" fill="url(#h26)"/>
<rect x="352" y="71" width="6" height="56" fill="url(#h27)"/>
<rect x="358" y="71" width="6" height="56" fill="url(#h28)"/>
<rect x="364" y="71" width="6" height="56" fill="url(#h29)"/>
<rect x="370" y="71" width="6" height="56" fill="url(#h30)"/>
<rect x="376" y="71" width="6" height="56" fill="url(#h31)"/>
<rect x="382" y="71" width="6" height="56" fill="url(#h32)"/>
<rect x="388" y="71" width="6" height="56" fill="url(#h33)"/>
<rect x="394" y="71" width="6" height="56" fill="url(#h34)"/>
<rect x="400" y="71" width="6" height="56" fill="url(#h35)"/>
<rect x="406" y="71" width="6" height="56" fill="url(#h36)"/>
<rect x="412" y="71" width="6" height="56" fill="url(#h37)"/>
<rect x="418" y="71" width="6" height="56" fill="url(#h38)"/>
<rect x="424" y="71" width="6" height="56" fill="url(#h39)"/>
<rect x="430" y="71" width="6" height="56" fill="url(#h40)"/>
<rect x="436" y="71" width="6" height="56" fill="url(#h41)"/>
<rect x="442" y="71" width="6" height="56" fill="url(#h42)"/>
<rect x="448" y="71" width="6" height="56" fill="url(#h43)"/>
<rect x="454" y="71" width="6" height="56" fill="url(#h44)"/>
<rect x="460" y="71" width="6" height="56" fill="url(#h45)"/>
<rect x="466" y="71" width="6" height="56" fill="url(#h46)"/>
<rect x="472" y="71" width="6" height="56" fill="url(#h47)"/>
<rect x="478" y="71" width="6" height="56" fill="url(#h48)"/>
<rect x="484" y="71" width="6" height="56" fill="url(#h49)"/>
<rect x="490" y="71" width="6" height="56" fill="url(#h50)"/>
<rect x="496" y="71" width="6" height="56" fill="url(#h51)"/>
<rect x="502" y="71" width="6" height="56" fill="url(#h52)"/>
<rect x="508" y="71" width="6" height="56" fill="url(#h53)"/>
<rect x="514" y="71" width="6" height="56" fill="url(#s13)"/>
<rect x="520" y="71" width="6" height="56" fill="url(#s15)"/>
<rect x="526" y="71" width="6" height="56" fill="url(#s17)"/>
<rect x="532" y="71" width="6" height="56" fill="url(#s19)"/>
<rect x="538" y="71" width="6" height="56" fill="url(#s21)"/>
<rect x="544" y="71" width="6" height="56" fill="url(#s23)"/>
<rect x="550" y="71" width="6" height="56" fill="url(#s25)"/>
<rect x="556" y="71" width="6" height="56" fill="url(#s27)"/>
<rect x="562" y="71" width="6" height="56" fill="url(#s29)"/>
<rect x="568" y="71" width="6" height="56" fill="url(#s31)"/>
<rect x="574" y="71" width="6" height="56" fill="url(#s33)"/>
<rect x="580" y="71" width="6" height="56" fill="url(#s35)"/>
<rect x="586" y="71" width="6" height="56" fill="url(#s37)"/>
<rect x="592" y="71" width="6" height="56" fill="url(#s39)"/>
<rect x="598" y="71" width="6" height="56" fill="url(#s41)"/>
<rect x="604" y="71" width="6" height="56" fill="url(#s43)"/>
<rect x="610" y="71" width="6" height="56" fill="url(#s45)"/>
<rect x="616" y="71" width="6" height="56" fill="url(#s47)"/>
<rect x="622" y="71" width="6" height="56" fill="url(#s49)"/>
<rect x="628" y="71" width="6" height="56" fill="url(#s51)"/>
<rect x="634" y="71" width="6" height="56" fill="url(#s53)"/>
<rect x="640" y="71" width="6" height="56" fill="url(#s55)"/>
<rect x="646" y="71" width="6" height="56" fill="url(#s57)"/>
<rect x="652" y="71" width="6" height="56" fill="url(#s59)"/>
<rect x="658" y="71" width="6" height="56" fill="url(#s61)"/>
<rect x="664" y="71" width="6" height="56" fill="url(#s63)"/>
<rect x="670" y="71" width="6" height="56" fill="url(#s65)"/>
<rect x="676" y="71" width="6" height="56" fill="url(#s67)"/>
<rect x="682" y="71" width="6" height="56" fill="url(#s69)"/>
<rect x="688" y="71" width="6" height="56" fill="url(#s71)"/>
<rect x="694" y="71" width="6" height="56" fill="url(#s73)"/>
<rect x="700" y="71" width="6" height="56" fill="url(#s75)"/>
<rect x="706" y="71" width="6" height="56" fill="url(#s77)"/>
<rect x="712" y="71" width="6" height="56" fill="url(#s79)"/>
<rect x="718" y="71" width="6" height="56" fill="url(#s81)"/>
<rect x="724" y="71" width="6" height="56" fill="url(#s83)"/>
<rect x="730" y="71" width="6" height="56" fill="url(#s85)"/>
<rect x="736" y="71" width="6" height="56" fill="url(#s87)"/>
<rect x="742" y="71" width="6" height="56" fill="url(#s89)"/>
<rect x="748" y="71" width="6" height="56" fill="url(#s91)"/>
<rect x="754" y="71" width="6" height="56" fill="url(#s93)"/>
<rect x="760" y="71" width="6" height="56" fill="url(#s95)"/>
</g>

</svg>
<!-- scene toolbar buttons (abs coords) -->
<div class="sb" style="left:289.7px;width:37.5px"></div>
<div class="sb" style="left:331px;width:37.4px"></div>
<div class="sb on" style="left:387.4px;width:21.6px;border-radius:2px 0 0 2.5px"></div>
<div class="sb on" style="left:410.2px;width:14.2px;border-radius:0 2px 2px 0"></div>
<div class="sb dim" style="left:427px;width:22.3px;border-radius:2px 0 0 2.5px"></div>
<div class="sb dim" style="left:450.4px;width:14px;border-radius:0 2px 2px 0"></div>
<div class="sb" style="left:467.3px;width:38.1px"></div>
<div class="sb" style="left:797.8px;width:37.4px"></div>
<div class="sb" style="left:838.4px;width:32.2px"></div>
<div class="sb on" style="left:873.8px;width:32.2px"></div>
<div class="sb" style="left:908.7px;width:31.6px"></div>
<div class="sb" style="left:943.2px;width:22.2px;border-radius:2px 0 0 2.5px"></div>
<div class="sb" style="left:966.8px;width:14.2px;border-radius:0 2px 2px 0"></div>
<div class="sb on" style="left:983.5px;width:32px"></div>
<div class="sb" style="left:1018.7px;width:37.3px"></div>
<div class="sb on" style="left:1059.6px;width:21.6px;border-radius:2px 0 0 2.5px"></div>
<div class="sb on" style="left:1082.6px;width:13.8px;border-radius:0 2px 2px 0"></div>

<!-- tools overlay -->
<div style="left:276px;top:105.3px;width:42.2px;height:143.2px;background:#242b2e;border-radius:4px;border:1px solid #191d1f"></div>
<div class="tool" style="top:121.4px;border-radius:3px 3px 0 0"></div>
<div class="tool" style="top:142.3px;background:#46607c"></div>
<div class="tool" style="top:162.7px;height:20px"></div>
<div class="tool" style="top:184.5px;height:18.6px"></div>
<div class="tool" style="top:205px;height:19.5px"></div>
<div class="tool" style="top:226px;height:20px;border-radius:0 0 3px 3px"></div>

<!-- ===== inspector ===== -->
<div id="p-insp" style="left:1101.8px;top:58px;width:338.2px;height:820px;background:#383838">
  <div style="left:0;top:0;width:338.2px;height:18.3px;background:#282828"></div>
  <div style="left:0;top:0;width:93.8px;height:18.3px;background:#3c3c3c;border-radius:3px 3px 0 0"></div>
</div>

<!-- ===== project ===== -->
<div id="p-proj" style="left:0;top:545.2px;width:1099.5px;height:332.8px;background:#383838">
  <div style="left:0;top:0;width:1099.5px;height:18.6px;background:#282828"></div>
  <div style="left:0;top:0;width:79.2px;height:18.6px;background:#3c3c3c;border-radius:3px 3px 0 0"></div>
  <div style="left:0;top:18.6px;width:1099.5px;height:19.4px;background:#3c3c3c"></div>
  <div style="left:0;top:38.6px;width:1099.5px;height:1.4px;background:#282828"></div>
  <div style="left:661.1px;top:20.8px;width:300.4px;height:15.4px;background:#272727;border:1px solid #1e1e1e;border-radius:3.5px"></div>
  <!-- left column -->
  <div style="left:0;top:71px;width:206.6px;height:15.8px;background:#4d4d4d"></div>
  <div style="left:206.6px;top:39.4px;width:2.2px;height:293.4px;background:#252525"></div>
  <!-- right column -->
  <div style="left:208.8px;top:39.4px;width:890.7px;height:293.4px;background:#333333"></div>
  <div style="left:208.8px;top:40px;width:890.7px;height:20px;background:#3c3c3c"></div>
  <div style="left:208.8px;top:60px;width:890.7px;height:1.2px;background:#262626"></div>
  <div style="left:208.8px;top:312px;width:890.7px;height:20.8px;background:#3f3f3f;border-top:1.2px solid #2a2a2a"></div>
</div>

<!-- ===== status bar ===== -->
<div id="status" style="left:0;top:878px;width:1440px;height:22px;background:#191919"></div>

<!-- ===== icons overlay (target px coordinates) ===== -->
<svg id="ico" viewBox="0 0 1000 625">
<!-- scene view contents -->
<defs>
<linearGradient id="gfade" x1="0" y1="0" x2="0" y2="1" gradientUnits="objectBoundingBox"><stop offset="0" stop-color="#fff" stop-opacity="0"/><stop offset=".12" stop-color="#fff" stop-opacity=".35"/><stop offset=".35" stop-color="#fff" stop-opacity="1"/><stop offset="1" stop-color="#fff" stop-opacity="1"/></linearGradient>
<linearGradient id="gfade2" x1="0" y1="0" x2="0" y2="1" gradientUnits="objectBoundingBox"><stop offset="0" stop-color="#fff" stop-opacity="0"/><stop offset=".2" stop-color="#fff" stop-opacity=".1"/><stop offset=".55" stop-color="#fff" stop-opacity=".55"/><stop offset="1" stop-color="#fff" stop-opacity="1"/></linearGradient>
<mask id="m1" maskUnits="userSpaceOnUse" x="190" y="93" width="574" height="284"><rect x="190" y="93" width="574" height="284" fill="url(#gfade)"/></mask>
<mask id="m2" maskUnits="userSpaceOnUse" x="190" y="93" width="574" height="284"><rect x="190" y="93" width="574" height="284" fill="url(#gfade2)"/></mask>
</defs>
<g clip-path="url(#vclip)" fill="none">
<g mask="url(#m2)"><path stroke="#ffffff" stroke-opacity=".045" stroke-width=".8" d="M476.8 129.9L770.0 166.7M476.8 129.9L185.0 166.6M474.1 130.3L770.0 168.1M479.5 130.3L185.0 167.9M471.4 130.6L770.0 169.5M482.2 130.6L185.0 169.3M468.6 131.0L770.0 170.9M485.0 131.0L185.0 170.7M465.8 131.3L770.0 172.4M487.8 131.3L185.0 172.3M462.9 131.7L770.0 174.0M490.7 131.7L185.0 173.8M460.0 132.0L770.0 175.6M493.6 132.0L185.0 175.4M457.0 132.4L770.0 177.3M496.6 132.4L185.0 177.1M454.0 132.8L770.0 179.1M499.6 132.8L185.0 178.9M450.9 133.2L770.0 181.0M502.7 133.2L185.0 180.7M447.7 133.6L770.0 182.9M505.9 133.6L185.0 182.7M444.5 134.0L770.0 184.9M509.1 134.0L185.0 184.7M441.2 134.4L770.0 187.0M512.4 134.4L185.0 186.8M437.8 134.8L770.0 189.2M515.8 134.8L185.0 189.0M434.4 135.3L770.0 191.5M519.2 135.3L185.0 191.3M430.9 135.7L770.0 193.9M522.7 135.7L185.0 193.7M427.3 136.2L770.0 196.5M526.3 136.2L185.0 196.2M423.6 136.6L770.0 199.1M530.0 136.6L185.0 198.9M419.9 137.1L770.0 201.9M533.7 137.1L185.0 201.7M416.1 137.6L770.0 204.9M537.5 137.6L185.0 204.6M412.2 138.0L770.0 208.0M541.4 138.0L185.0 207.8M408.2 138.5L770.0 211.4M545.4 138.5L185.0 211.1M404.2 139.1L770.0 214.9M549.4 139.1L185.0 214.6M400.0 139.6L770.0 218.6M553.6 139.6L185.0 218.3M395.8 140.1L770.0 222.5M557.8 140.1L185.0 222.2M391.4 140.7L770.0 226.8M562.2 140.7L185.0 226.4M386.9 141.2L770.0 231.3M566.7 141.2L185.0 230.9M382.4 141.8L770.0 236.1M571.2 141.8L185.0 235.7M377.7 142.4L770.0 241.2M575.9 142.4L185.0 240.9M372.9 143.0L770.0 246.8M580.7 143.0L185.0 246.4M368.0 143.6L770.0 252.7M585.6 143.6L185.0 252.4M363.0 144.2L770.0 259.2M590.6 144.2L185.0 258.8M357.9 144.9L770.0 266.2M595.7 144.9L185.0 265.8M352.6 145.5L770.0 273.8M601.0 145.5L185.0 273.4M347.2 146.2L770.0 282.1M606.4 146.2L185.0 281.6M341.6 146.9L770.0 291.2M612.0 146.9L185.0 290.7M335.9 147.6L770.0 301.2M617.7 147.6L185.0 300.7M330.1 148.4L770.0 312.3M623.5 148.4L185.0 311.8M324.1 149.1L770.0 324.7M629.5 149.1L185.0 324.1M317.9 149.9L770.0 338.5M635.7 149.9L185.0 337.9M311.5 150.7L770.0 354.1M642.1 150.7L185.0 353.4M305.0 151.5L770.0 371.7M648.6 151.5L185.0 371.1M298.3 152.3L746.4 380.0M655.3 152.3L207.2 380.0M291.3 153.2L705.4 380.0M662.3 153.2L248.2 380.0M284.2 154.1L664.4 380.0M669.4 154.1L289.2 380.0M276.9 155.0L623.3 380.0M676.7 155.0L330.3 380.0M269.3 156.0L582.3 380.0M684.3 156.0L371.3 380.0M261.5 157.0L541.3 380.0M692.1 157.0L412.3 380.0M253.5 158.0L500.3 380.0M700.1 158.0L453.3 380.0M245.2 159.0L459.2 380.0M708.4 159.0L494.4 380.0M236.6 160.1L418.2 380.0M717.0 160.1L535.4 380.0M227.8 161.2L377.2 380.0M725.8 161.2L576.4 380.0M218.6 162.3L336.2 380.0M735.0 162.3L617.4 380.0M209.2 163.5L295.2 380.0M744.4 163.5L658.4 380.0M199.4 164.8L254.1 380.0M754.2 164.8L699.5 380.0M189.3 166.0L213.1 380.0M764.3 166.0L740.5 380.0"/></g>
<g mask="url(#m1)"><path stroke="#ffffff" stroke-opacity=".05" stroke-width="1" d="M476.8 96.2L770.0 99.5M476.8 96.2L185.0 99.5M474.4 96.2L770.0 99.6M479.2 96.2L185.0 99.6M471.9 96.2L770.0 99.8M481.7 96.2L185.0 99.7M469.4 96.3L770.0 99.9M484.2 96.3L185.0 99.9M466.9 96.3L770.0 100.0M486.7 96.3L185.0 100.0M464.3 96.3L770.0 100.1M489.3 96.3L185.0 100.1M461.7 96.4L770.0 100.2M491.9 96.4L185.0 100.2M459.0 96.4L770.0 100.4M494.6 96.4L185.0 100.4M456.3 96.4L770.0 100.5M497.3 96.4L185.0 100.5M453.5 96.5L770.0 100.7M500.1 96.5L185.0 100.7M450.7 96.5L770.0 100.8M502.9 96.5L185.0 100.8M447.8 96.5L770.0 101.0M505.8 96.5L185.0 101.0M444.9 96.6L770.0 101.1M508.7 96.6L185.0 101.1M441.9 96.6L770.0 101.3M511.7 96.6L185.0 101.3M438.9 96.6L770.0 101.5M514.7 96.6L185.0 101.5M435.8 96.7L770.0 101.7M517.8 96.7L185.0 101.7M432.6 96.7L770.0 101.9M521.0 96.7L185.0 101.9M429.4 96.7L770.0 102.1M524.2 96.7L185.0 102.1M426.2 96.8L770.0 102.3M527.4 96.8L185.0 102.3M422.9 96.8L770.0 102.5M530.7 96.8L185.0 102.5M419.5 96.8L770.0 102.7M534.1 96.8L185.0 102.7M416.0 96.9L770.0 103.0M537.6 96.9L185.0 103.0M412.5 96.9L770.0 103.2M541.1 96.9L185.0 103.2M408.9 97.0L770.0 103.5M544.7 97.0L185.0 103.5M405.2 97.0L770.0 103.8M548.4 97.0L185.0 103.8M401.5 97.0L770.0 104.1M552.1 97.0L185.0 104.1M397.7 97.1L770.0 104.4M555.9 97.1L185.0 104.4M393.8 97.1L770.0 104.8M559.8 97.1L185.0 104.7M389.8 97.2L770.0 105.1M563.8 97.2L185.0 105.1M385.7 97.2L770.0 105.5M567.9 97.2L185.0 105.5M381.6 97.3L770.0 105.9M572.0 97.3L185.0 105.9M377.3 97.3L770.0 106.3M576.3 97.3L185.0 106.3M373.0 97.4L770.0 106.8M580.6 97.4L185.0 106.7M368.6 97.4L770.0 107.3M585.0 97.4L185.0 107.2M364.0 97.5L770.0 107.8M589.6 97.5L185.0 107.7M359.4 97.5L770.0 108.3M594.2 97.5L185.0 108.3M354.7 97.6L770.0 108.9M598.9 97.6L185.0 108.9M349.8 97.6L770.0 109.6M603.8 97.6L185.0 109.6M344.9 97.7L770.0 110.3M608.7 97.7L185.0 110.3M339.8 97.8L770.0 111.1M613.8 97.8L185.0 111.0M334.6 97.8L770.0 111.9M619.0 97.8L185.0 111.9M329.2 97.9L770.0 112.9M624.4 97.9L185.0 112.8M323.8 97.9L770.0 113.9M629.8 97.9L185.0 113.8M318.2 98.0L770.0 115.0M635.4 98.0L185.0 115.0M312.4 98.1L770.0 116.3M641.2 98.1L185.0 116.2M306.6 98.1L770.0 117.7M647.0 98.1L185.0 117.6M300.5 98.2L770.0 119.3M653.1 98.2L185.0 119.2M294.3 98.3L770.0 121.1M659.3 98.3L185.0 121.0M288.0 98.3L770.0 123.2M665.6 98.3L185.0 123.1M281.4 98.4L770.0 125.6M672.2 98.4L185.0 125.5M274.7 98.5L770.0 128.4M678.9 98.5L185.0 128.4M267.8 98.6L770.0 131.8M685.8 98.6L185.0 131.7M260.7 98.6L770.0 135.9M692.9 98.6L185.0 135.8M253.4 98.7L770.0 140.9M700.2 98.7L185.0 140.8M245.9 98.8L770.0 147.2M707.7 98.8L185.0 147.1M238.2 98.9L770.0 155.5M715.4 98.9L185.0 155.3M230.2 99.0L770.0 166.7M723.4 99.0L185.0 166.6M222.0 99.1L770.0 182.9M731.6 99.1L185.0 182.7M213.6 99.2L770.0 208.0M740.0 99.2L185.0 207.8M204.9 99.3L770.0 252.7M748.7 99.3L185.0 252.4M195.9 99.4L770.0 354.1M757.7 99.4L185.0 353.4M186.6 99.5L418.2 380.0M767.0 99.5L535.4 380.0"/></g>
</g>
<!-- camera gizmo icon -->
<path d="M400.600 183.200q-.4-1.700 1.300-1.900q.9-.1 1.400.5q.3-1.700 2.100-1.600q1.700.2 1.600 2l1.800 1.500q.5.600-.2 1.100l-1.700.3q-.2 1.400-1.500 1.400h-3.300q-1.300 0-1.500-1.400z" fill="#ffffff"/>
<!-- light gizmo icon -->
<g stroke="#e9dcae" stroke-width=".7" stroke-opacity=".9" fill="none">
<path d="M476.600 180.200v2.300M476.600 189.500v2.300M470.800 186h2.300M480.100 186h2.300M472.500 181.900l1.600 1.600M479.100 188.500l1.600 1.600M472.500 190.100l1.600-1.600M479.100 183.500l1.600-1.600"/>
<circle cx="476.600" cy="186" r="3.200" stroke-opacity=".55"/>
</g>
<circle cx="476.600" cy="186" r="2.300" fill="#fff0c4"/>
<!-- orientation gizmo -->
<defs>
<linearGradient id="gg" x1="0" x2="1" y1="0" y2="0"><stop offset="0" stop-color="#84d445"/><stop offset=".5" stop-color="#6fc23a"/><stop offset=".55" stop-color="#5dac30"/><stop offset="1" stop-color="#4f9a2a"/></linearGradient>
<linearGradient id="gr" x1="0" x2="1" y1="0" y2="1"><stop offset="0" stop-color="#d4462a"/><stop offset=".55" stop-color="#c23a20"/><stop offset=".6" stop-color="#98301c"/><stop offset="1" stop-color="#7c2414"/></linearGradient>
<linearGradient id="gb" x1="1" x2="0" y1="0" y2="1"><stop offset="0" stop-color="#2c52b8"/><stop offset=".3" stop-color="#2f5ccc"/><stop offset=".35" stop-color="#3a6be0"/><stop offset="1" stop-color="#3563d6"/></linearGradient>
<linearGradient id="gw2" x1="0" x2=".4" y1="0" y2="1"><stop offset="0" stop-color="#e8e8e8"/><stop offset=".45" stop-color="#ffffff"/><stop offset="1" stop-color="#a8a8a8"/></linearGradient>
<linearGradient id="gw3" x1="1" x2=".6" y1="0" y2="1"><stop offset="0" stop-color="#dcdcdc"/><stop offset=".45" stop-color="#f6f6f6"/><stop offset="1" stop-color="#9c9c9c"/></linearGradient>
<linearGradient id="gw" x1="0" x2="1" y1="0" y2="0"><stop offset="0" stop-color="#cfcfcf"/><stop offset=".45" stop-color="#ffffff"/><stop offset="1" stop-color="#c4c4c4"/></linearGradient>
</defs>
<path d="M691.200 77.200h11.300M691.200 79.600h11.300" stroke="#5a6266" stroke-width=".6" fill="none"/>
<!-- white cones -->
<path d="M721.900 123.100l3.300-9.500l3.400 9.500a3.350 1.200 0 0 1-6.700 0z" fill="url(#gw)"/>
<path d="M720.400 105.400l-5.900-5.300a2.300 2.900 -25 0 0-1.400 5.700z" fill="url(#gw2)"/>
<path d="M729.900 105.400l5.900-5.300a2.300 2.900 25 0 1 1.400 5.700z" fill="url(#gw3)"/>
<!-- centre cube -->
<path d="M725.100 102l5.500 3.100l-5.400 3.100l-5.500-3.100z" fill="#c9cacc"/>
<path d="M719.700 105.100l5.500 3.100v6.100l-5.200-3.200z" fill="#b6b8ba"/>
<path d="M730.600 105.100l-5.400 3.100v6.100l5.100-3.200z" fill="#a9abad"/>
<!-- green -->
<path d="M720.050 88.300a5.100 .8 0 0 1 10.200 0l-5.050 13.400z" fill="url(#gg)"/>
<ellipse cx="725.150" cy="88.300" rx="5.100" ry=".75" fill="#5aa534"/>
<!-- red -->
<path d="M706 110.400l14.750-.9l-10.200 10.400q-5-3-4.550-9.500z" fill="url(#gr)"/>
<!-- blue -->
<path d="M745.050 110.400l-15.150-.9l10.550 10.400q5-3 4.600-9.500z" fill="url(#gb)"/>
<!-- gizmo lock -->
<g opacity=".55"><rect x="745.700" y="85.600" width="4.800" height="3.200" rx=".4" fill="#8d979b"/><path d="M746.800 85.600v-1.300q0-1.200 1.300-1.200t1.300 1.200v.4" fill="none" stroke="#8d979b" stroke-width=".8"/></g>
<!-- persp icon -->
<path d="M714.900 139.400l-6.800 3.200l6.800 3.200M708.100 142.600h6.800" fill="none" stroke="#d4d4d4" stroke-opacity=".8" stroke-width=".75"/>

<!-- traffic lights -->
<g>
<circle cx="9.6" cy="9.6" r="4.3" fill="#fe5f57"/>
<circle cx="23.6" cy="9.6" r="4.3" fill="#febc2e"/>
<circle cx="37.5" cy="9.6" r="4.3" fill="#28c840"/>
</g>
<!-- title doc icon -->
<g>
<path d="M318.6 3.8H323l3.1 2.8v6.5q0 .7-.7.7h-6.8q-.7 0-.7-.7V4.500q0-.7.7-.7z" fill="#fafafa"/>
<path d="M320.300 7.100l1.300 2.200h-2.400zM323.800 7.100l1.200 2.200h-2.500z" fill="#4a4a4a"/>
<ellipse cx="322.100" cy="11.400" rx="1.700" ry=".75" fill="#1a1a1a"/>
<path d="M322.050 6.200v3.600" stroke="#bdbdbd" stroke-width=".7"/>
</g>
<!-- cloud -->
<path d="M50.900 33.100a2.450 2.450 0 0 1-.3-4.880a3.400 3.400 0 0 1 6.500-.9a2.950 2.950 0 0 1 .3 5.780z" fill="#dadada"/>
<!-- collab -->
<g stroke="#cfcfcf" stroke-width=".8" fill="none">
<path d="M77.300 25.800v3.200M77.300 32v2.600M74.200 29l1.900.9M80.600 29l-1.900.9M74.200 32.200l1.900-.9"/>
<circle cx="77.300" cy="30.500" r="1.500" stroke-width="1"/>
</g>
<g fill="#d4d4d4"><rect x="72.900" y="28" width="1.600" height="1.600"/><rect x="80" y="28" width="1.600" height="1.600"/><rect x="72.900" y="31.500" width="1.600" height="1.600"/><rect x="76.600" y="25.400" width="1.400" height="1.400"/></g>
<path d="M78.700 31.700l3 3.300M81.700 31.700l-3 3.300" stroke="#f4503f" stroke-width="1.300" fill="none"/>
<!-- play / pause / step -->
<g fill="#c9c9c9">
<path d="M475.100 26.300l6.100 3.400l-6.100 3.400z"/>
<rect x="497.300" y="26.300" width="2.250" height="6.800" rx=".4"/>
<rect x="501.400" y="26.300" width="2.250" height="6.800" rx=".4"/>
<path d="M518.900 26.300l5 3.400l-5 3.400z"/>
<rect x="524.300" y="26.300" width="1.800" height="6.800"/>
</g>
<!-- history -->
<g fill="none" stroke="#d0d0d0" stroke-width="1.100">
<path d="M840.300 27.600a3.900 3.900 0 1 1-.6 3.500"/>
<path d="M843.600 27.900v2.300h1.900" stroke-width=".9"/>
</g>
<path d="M838.800 26.100l.3 3l2.700-.9z" fill="#d0d0d0"/>
<!-- search -->
<g fill="none" stroke="#d0d0d0">
<circle cx="865.500" cy="28.200" r="2.600" stroke-width="1"/>
<path d="M867.500 30.100l3.700 3" stroke-width="1.500" stroke-linecap="round"/>
</g>
<!-- dropdown arrows -->
<path d="M928.800 28.700h5l-2.500 2.700z" fill="#d6d6d6"/>
<path d="M986.200 28.700h5l-2.500 2.700z" fill="#d6d6d6"/>

<!-- hierarchy tab icon -->
<g stroke="#c8c8c8" stroke-width="1" fill="none">
<path d="M5 44.400h7.600"/>
<path d="M6.700 46.200h5.900M6.700 47.900h5.900M6.700 49.600h5.900" stroke="#bdbdbd" stroke-width=".9"/>
</g>
<!-- plus + arrow (hierarchy) -->
<path d="M9.100 55.700v9.200M4.900 60.300h8.500" stroke="#d8d8d8" stroke-width="1.400" fill="none"/>
<path d="M16.200 59h5.400l-2.700 3z" fill="#d0d0d0"/>
<!-- search icon -->
<g fill="none" stroke="#b4b4b4">
<circle cx="35.200" cy="59.300" r="1.900" stroke-width=".9"/>
<path d="M36.600 60.800l1.700 1.800" stroke-width="1.100"/>
</g>
<circle cx="38.900" cy="60" r=".6" fill="#b4b4b4"/>
<!-- lock (open) + kebab : hierarchy -->
<g id="lk">
<rect x="165.200" y="46.300" width="5.300" height="3.200" rx=".6" fill="none" stroke="#c4c4c4" stroke-width="1.050"/>
<path d="M166.400 46.200v-1.300q0-1.600 1.600-1.600q1.600 0 1.600 1.600v.2" fill="none" stroke="#c4c4c4" stroke-width="1"/>
</g>
<g id="kb" fill="#c4c4c4"><circle cx="179.500" cy="43.800" r=".78"/><circle cx="179.500" cy="46.600" r=".78"/><circle cx="179.500" cy="49.400" r=".78"/></g>
<!-- search by type icon -->
<g id="sbt" fill="none" stroke="#bcbcbc" stroke-width=".9">
<rect x="177.400" y="56.400" width="7.300" height="7" rx="1"/>
<rect x="176.200" y="61.200" width="3.300" height="3.300" rx=".5" fill="#3c3c3c"/>
<path d="M180 60.900l2.800-2.800M180.900 58h2v2"/>
</g>
<!-- row kebab -->
<g fill="#c4c4c4"><circle cx="180" cy="70.400" r=".78"/><circle cx="180" cy="73.200" r=".78"/><circle cx="180" cy="76" r=".78"/></g>
<!-- foldout -->
<path d="M23.700 71h5.800l-2.900 5z" fill="#7a7a7a"/>
<!-- unity scene icon -->
<g>
<path d="M37.500 68.600l4.300 2.500v4.800l-4.300 2.500l-4.300-2.500v-4.800z" fill="#f6f6f6"/>
<path d="M36.300 69.300h2.400l-.5 2.700l-.7.900l-.7-.9z" fill="#454545"/>
<path d="M33.900 72.700l2.500 1.100l.5 1.100l-1.900 1.900z" fill="#454545"/>
<path d="M41.100 72.700l-2.500 1.100l-.5 1.100l1.900 1.900z" fill="#454545"/>
</g>
<!-- gameobject cubes -->
<g fill="none" stroke="#c2c2c2" stroke-width=".95" stroke-linejoin="round">
<path id="cube1" d="M46.900 80.200l4.300 2.400v4.900l-4.300 2.400l-4.300-2.400v-4.900zM42.700 82.700l4.200 2.300l4.200-2.300M46.900 85v4.800"/>
<path d="M46.900 91.300l4.300 2.400v4.900l-4.300 2.400l-4.300-2.400v-4.900zM42.700 93.800l4.200 2.300l4.200-2.300M46.900 96.100v4.800"/>
</g>
<!-- inspector tab icon + lock + kebab -->
<circle cx="774.500" cy="47" r="3.700" fill="#d0d0d0"/>
<path d="M774.500 46.500v2.800" stroke="#3a3a3a" stroke-width="1.100"/><circle cx="774.500" cy="44.800" r=".7" fill="#3a3a3a"/>
<use href="#lk" x="810.6" y="0"/>
<g fill="#c4c4c4"><circle cx="990.100" cy="43.800" r=".78"/><circle cx="990.100" cy="46.600" r=".78"/><circle cx="990.100" cy="49.400" r=".78"/></g>
<!-- scene kebab -->
<g fill="#c4c4c4"><circle cx="754.300" cy="43.600" r=".78"/><circle cx="754.300" cy="46.500" r=".78"/><circle cx="754.300" cy="49.400" r=".78"/></g>

<!-- scene tab icon (#) -->
<g fill="none">
<path d="M195.700 45.300h6.800M195.700 47.200h6.800M195.700 49.100h6.800" stroke="#a8a8a8" stroke-width=".7"/>
<path d="M196.800 43.700v6.500M199 43.700v6.500M201.200 43.700v6.500" stroke="#c8c8c8" stroke-width=".9"/>
</g>
<!-- game tab icon -->
<g>
<rect x="249.300" y="45.200" width="9.500" height="4.700" rx="2.350" fill="#d8d8d8"/>
<path d="M250.800 47.550h2.300M251.950 46.400v2.300" stroke="#2a2a2a" stroke-width=".75"/>
<circle cx="255.500" cy="48.300" r=".65" fill="#2a2a2a"/><circle cx="257" cy="46.900" r=".65" fill="#2a2a2a"/>
</g>
<!-- drag handles -->
<g stroke="#5a5a5a" stroke-width=".6">
<path d="M194.500 57.200v10.400M196.200 57.200v10.400M262.500 57.200v10.400M264.200 57.200v10.400M547.800 57.200v10.400M549.500 57.200v10.400"/>
</g>
<!-- pivot button -->
<rect x="204.300" y="57.800" width="9" height="9.200" rx="1.600" fill="#3a464d" stroke="#a8a8a8" stroke-width=".85"/>
<path d="M205 66.300l7.600-7.800" stroke="#9a9a9a" stroke-width=".8"/>
<circle cx="208.800" cy="62.500" r="2.100" fill="#3a464d" stroke="#e8602c" stroke-width=".85"/>
<path d="M217.500 61h5.600l-2.800 3.100z" fill="#d8d8d8"/>
<!-- cube/global button -->
<g fill="none" stroke="#a8a8a8" stroke-width=".85" stroke-linejoin="round">
<path d="M237.100 57.300l4.700 2.100v5.200l-4.700 2.300l-4.700-2.300v-5.200zM232.500 59.500l4.600 2.200l4.600-2.200M237.100 61.700v5.100"/>
</g>
<circle cx="239.800" cy="65.200" r="2.100" fill="#515151" stroke="#e8602c" stroke-width=".85"/>
<path d="M246.200 61h5.600l-2.800 3.100z" fill="#d8d8d8"/>
<!-- grid visibility (blue) -->
<g stroke="#f2f2f2" stroke-width="1" fill="none">
<path d="M273.400 57.900v8.900M276.400 57.900v8.900M279.400 57.900v4M271.700 59.700h9.800M271.700 62.300h9.800M271.700 64.900h5.400"/>
</g>
<path d="M277.600 62.700l1.950 2.400l1.950-2.400M279.550 65.100v2" stroke="#46607c" stroke-width="2.400" fill="none"/>
<path d="M277.600 62.700l1.950 2.400l1.950-2.400M279.550 65.100v2" stroke="#ffffff" stroke-width="1.150" fill="none"/>
<path d="M287.400 61h5.400l-2.700 3.100z" fill="#e6e6e6"/>
<!-- snap (dim) -->
<g stroke="#7e7e7e" stroke-width=".8" fill="none">
<path d="M300.800 58v8.600M303 58v4.600M305.200 58v3.600M307.500 58v3.600M300 59h8.300M300 61.300h8.300M300 63.500h2.600M300 65.800h2.600"/>
</g>
<g fill="#8a8a8a"><circle cx="300.800" cy="59" r=".6"/><circle cx="303" cy="59" r=".6"/><circle cx="305.200" cy="59" r=".6"/><circle cx="307.500" cy="59" r=".6"/><circle cx="300.800" cy="61.300" r=".6"/><circle cx="303" cy="61.300" r=".6"/><circle cx="305.200" cy="61.300" r=".6"/><circle cx="307.500" cy="61.300" r=".6"/><circle cx="300.800" cy="63.500" r=".6"/><circle cx="300.800" cy="65.800" r=".6"/></g>
<path d="M304.400 63.200h2.900a1.550 1.550 0 0 1 0 3.100h-2.900" fill="none" stroke="#e4582a" stroke-width="1.200"/>
<path d="M303.400 63.200h1.200M303.400 66.300h1.200" stroke="#d6d6d6" stroke-width="1.200"/>
<path d="M314.900 61h5.400l-2.700 3.100z" fill="#8a8a8a"/>
<!-- ruler / increment snap -->
<path d="M327.100 57.600h2.300v1.900h1.700v-1.900h1.900v1.900h1.700v-1.900h2.500v9h-2.500v-1.800h-1.700v1.800h-1.900v-1.800h-1.700v1.800h-2.300z" fill="#9c9c9c"/>
<rect x="328.400" y="61.200" width="7.500" height="1.700" fill="#bdbdbd"/>
<path d="M341.400 61h5.400l-2.700 3.100z" fill="#d8d8d8"/>
<!-- draw mode -->
<circle cx="561.600" cy="62.400" r="4.200" fill="none" stroke="#c8c8c8" stroke-width=".85"/>
<path d="M565 59.900a3.600 3.600 0 0 1-6.200 5.300" fill="none" stroke="#c8c8c8" stroke-width="1.700"/>
<path d="M570.400 61.300h5.400l-2.700 2.900z" fill="#d8d8d8"/>
<!-- light bulb -->
<g fill="#f4f4f4">
<path d="M617.650 58.100a3.200 3.200 0 0 1 1.700 5.900v1.100h-3.400v-1.100a3.200 3.200 0 0 1 1.700-5.900z"/>
<rect x="616.200" y="65.500" width="2.900" height=".9" rx=".3"/>
</g>
<!-- audio muted -->
<g fill="#c2c2c2">
<rect x="638.100" y="60.100" width="1.400" height="3.100"/>
<path d="M640.600 60.100l2.800-1.400v6.500l-2.800-1.400z"/>
</g>
<path d="M643.800 62.700l2.600 2.900M646.400 62.700l-2.600 2.900" stroke="#c2c2c2" stroke-width=".85"/>
<!-- fx -->
<g fill="#cdcdcd">
<path d="M659.200 63.700l3.700 1.300l3.700-1.300v1.100l-3.700 1.400l-3.700-1.400z"/>
<path d="M659.200 61.200l3-1.100l.9 1.600l3.500-.5v1.100l-3.700 1.400l-3.700-1.400z"/>
<path d="M664.900 57.500l.65 1.550l1.550.65l-1.550.65l-.65 1.550l-.65-1.550l-1.550-.65l1.550-.65z"/>
</g>
<path d="M673.400 61.100h5.300l-2.650 2.900z" fill="#d8d8d8"/>
<!-- hidden eye (blue) -->
<g fill="none" stroke="#f2f2f2">
<path d="M689.500 62.400q4.700-5.400 9.400 0q-4.700 5.400-9.400 0z" stroke-width=".95"/>
<circle cx="694.600" cy="62.400" r="1.350" stroke-width=".85"/>
<path d="M690.300 66l8.200-7.600" stroke-width="1.100"/>
</g>
<!-- camera -->
<g fill="#c8c8c8"><rect x="711.100" y="59.700" width="5" height="5.800" rx=".5"/><path d="M716.800 61.500l2.300-1.500v5.200l-2.300-1.500z"/></g>
<path d="M712.800 59.700v5.800M714.500 59.700v5.800" stroke="#9a9a9a" stroke-width=".4"/>
<path d="M724.100 61h5.400l-2.700 3.100z" fill="#d8d8d8"/>
<!-- gizmos sphere (blue) -->
<g fill="none" stroke="#f4f4f4" stroke-width=".9">
<circle cx="743.500" cy="62.400" r="4.300"/>
<path d="M739.300 61.800q4.200 2.400 8.400 0M743 58.200q-2 4.200.6 8.400"/>
</g>
<g fill="#ffffff"><circle cx="743.700" cy="58.400" r=".95"/><circle cx="739.600" cy="61.700" r=".95"/><circle cx="746.200" cy="65.400" r=".95"/><circle cx="742.900" cy="62.800" r=".8"/></g>
<path d="M754.200 61h5.200l-2.600 3.100z" fill="#e6e6e6"/>

<!-- ===== tool overlay ===== -->
<path d="M200.800 77.200h11M200.800 79.400h11" stroke="#4d5558" stroke-width=".7"/>
<!-- hand -->
<g stroke="#d4d4d4" stroke-width="1.450" stroke-linecap="round" fill="none"><path d="M204.100 86.700l.4 4.300M206.400 85.900v5.100M208.600 86.700l-.4 4.300M210.600 88.800l-1.200 3.200M201.700 90.400l2 2.600"/></g>
<path d="M203.300 90.500h6.700l-.5 2.700l-.7 2.700h-4.600l-1.500-2.800z" fill="#d4d4d4"/>
<!-- move -->
<g fill="#f6f6f6">
<path d="M206.300 101.800v2.500M206.300 106.700v2.500M202.600 105.500h2.500M207.500 105.500h2.500" fill="none" stroke="#f6f6f6" stroke-width=".8"/>
<path d="M206.300 99.900l1.650 2.300h-3.300zM206.300 111.100l1.650-2.300h-3.300zM200.700 105.500l2.300-1.650v3.300zM211.900 105.500l-2.300-1.650v3.300z"/>
</g>
<!-- rotate -->
<g fill="none" stroke="#c8c8c8" stroke-width=".9">
<path d="M205.500 115.900a4.500 4.500 0 0 0-1.450 8.300M207.100 124.700a4.500 4.500 0 0 0 1.450-8.300"/>
</g>
<path d="M206 125.200l-3.300 1l2.100-3.900zM206.600 115.400l3.300-1l-2.100 3.900z" fill="#c8c8c8"/>
<!-- scale -->
<g fill="none" stroke="#c6c6c6" stroke-width=".85">
<rect x="201.600" y="130" width="9.600" height="9.200" rx=".8"/>
<rect x="201.600" y="136.200" width="3" height="3"/>
<path d="M205.300 135.500l3.500-3.500M206.300 132h2.500v2.500"/>
</g>
<!-- rect -->
<g fill="none" stroke="#c6c6c6" stroke-width=".8"><rect x="202.300" y="145.300" width="8" height="7.600" stroke-dasharray="2.400 1"/></g>
<g fill="#e8e8e8"><rect x="201.400" y="144.400" width="1.700" height="1.700"/><rect x="209.500" y="144.400" width="1.700" height="1.700"/><rect x="201.400" y="152.100" width="1.700" height="1.700"/><rect x="209.500" y="152.100" width="1.700" height="1.700"/></g>
<!-- transform -->
<g fill="none" stroke="#c6c6c6" stroke-width=".8">
<circle cx="206.300" cy="163.900" r="4.300" stroke-dasharray="2.600 .9"/>
<path d="M206.300 160.700v6.400M203.100 163.900h6.400"/>
<path d="M200.700 169.400l1.600-1.600M211.900 158.400l-1.600 1.600"/>
</g>
<path d="M200.300 169.800v-1.700l1.700 1.700zM212.300 158v1.700l-1.700-1.700z" fill="#d0d0d0"/>

<!-- project tab folder icon -->
<path id="fold" d="M5 382.600q0-.5.500-.5h2.600l1.100 1.200h3.400q.5 0 .5.500v4.700q0 .5-.5.500h-7.100q-.5 0-.5-.5z" fill="#c4c4c4"/>
<!-- console tab icon -->
<g>
<rect x="62.250" y="381" width="7.400" height="8" rx="1" fill="#c8c8c8"/>
<rect x="63.900" y="382.100" width="4.300" height="5.800" fill="#8e8e8e"/>
<path d="M64.700 382.100v5.800M66 382.100v5.800" stroke="#787878" stroke-width=".5"/>
<path d="M69.650 383.800h-2.200l-.9.700l.9.700h2.200z" fill="#2c2c2c"/>
</g>
<!-- plus + arrow (project) -->
<path d="M9.100 394v9.100M4.900 398.550h8.500" stroke="#d8d8d8" stroke-width="1.400" fill="none"/>
<path d="M16.300 397h5.200l-2.600 3z" fill="#d0d0d0"/>
<!-- favorites star -->
<path d="M16.750 407.800l1.150 2.500l2.700.3l-2 1.850l.55 2.700l-2.400-1.400l-2.400 1.400l.55-2.700l-2-1.850l2.700-.3z" fill="#d2d2d2"/>
<!-- assets foldout + open folder -->
<path d="M2.900 431h5.800l-2.900 5z" fill="#7c7c7c"/>
<path d="M12.300 436.900v-6.700q0-.5.500-.5h2.500l1.100 1.200h3.300q.5 0 .5.500v.9h-5.600l-2.300 4.600z" fill="#d6d6d6"/>
<path d="M15 432.900h6.600l-1.700 4h-7.200z" fill="#e6e6e6"/>
<!-- scenes folder -->
<path d="M22 441.800q0-.5.500-.5h2.600l1.100 1.200h3.800q.5 0 .5.500v4.500q0 .5-.5.500h-7.500q-.5 0-.5-.5z" fill="#c4c4c4"/>
<!-- packages foldout + folder -->
<path d="M3.500 452.700l4.700 2.900l-4.700 2.900z" fill="#7c7c7c"/>
<path d="M12.300 452.900q0-.5.500-.5h2.600l1.100 1.200h3.900q.5 0 .5.500v4.500q0 .5-.5.500h-7.600q-.5 0-.5-.5z" fill="#c8c8c8"/>
<!-- big folder -->
<path d="M160.400 438q0-1.800 1.800-1.800h10.800q.9 0 1.500.7l2.800 4.200q.5.800 1.400.8h13q1.800 0 1.800 1.800v18.500q0 1.800-1.800 1.800h-29.500q-1.800 0-1.800-1.800z" fill="#c3c3c3"/>
<!-- project search icon -->
<g fill="none" stroke="#b8b8b8"><circle cx="464.300" cy="398.200" r="1.700" stroke-width=".9"/><path d="M465.600 399.600l1.900 1.900" stroke-width="1.100"/></g>
<!-- project lock + kebab -->
<use href="#lk" x="574.600" y="338"/>
<g fill="#c4c4c4"><circle cx="754.400" cy="382" r=".78"/><circle cx="754.400" cy="385" r=".78"/><circle cx="754.400" cy="388" r=".78"/></g>
<!-- toolbar separators -->
<path d="M681.700 392v13M699.600 392v13M717.500 392v13M735.400 392v13" stroke="#303030" stroke-width=".8"/>
<!-- search by type -->
<use href="#sbt" x="493.200" y="338.100"/>
<!-- search by label: square, circle, triangle -->
<g fill="#c8c8c8"><rect x="687.400" y="394.100" width="3.300" height="3" rx=".3"/><circle cx="688.600" cy="400.400" r="2.300"/><path d="M692.500 395.500l2.400 4.700h-3.600z"/></g>
<!-- tag -->
<path d="M704.700 399.300l4.200-4.200q.3-.3.700-.2l1.900.3q.4.100.4.500l-.1 2.200q0 .3-.3.600l-3.900 3.900q-.5.500-1 0l-1.900-2.100q-.5-.5 0-1z" fill="#c8c8c8"/>
<circle cx="710.300" cy="396.600" r=".6" fill="#3c3c3c"/>
<!-- star (dim) -->
<path d="M726.550 394.300l1.200 2.700l2.900.3l-2.150 2l.6 2.900l-2.550-1.500l-2.550 1.500l.6-2.900l-2.150-2l2.900-.3z" fill="#878787"/>
<!-- hidden eye + 16 -->
<g fill="none" stroke="#c6c6c6">
<path d="M740.100 398.600q4.700-5.200 9.400 0q-4.700 5.200-9.400 0z" stroke-width=".9"/>
<circle cx="745" cy="398.600" r="1.300" stroke-width=".8"/>
<path d="M740.700 402.400l8.600-7.700" stroke-width="1.050"/>
</g>
<!-- zoom slider -->
<path d="M714 602.400h38.400" stroke="#6a6a6a" stroke-width=".9"/>
<circle cx="736.400" cy="602.400" r="3.650" fill="#9b9b9b"/>
<!-- status bar -->
<path d="M926.800 611v13M944.800 611v13M963.600 611v13M981.200 611v13" stroke="#2b2b2b" stroke-width=".8"/>
<!-- bug -->
<g fill="#b4b4b4">
<ellipse cx="936" cy="618.700" rx="3" ry="3.700"/>
<circle cx="936" cy="614.500" r="1.500"/>
</g>
<path d="M932 616.200l2 1.200M940 616.200l-2 1.200M931.300 619h2.200M940.700 619h-2.200M932 622.300l2-1.400M940 622.300l-2-1.400" stroke="#b4b4b4" stroke-width="1"/>
<path d="M931.500 613l9.600 10" stroke="#191919" stroke-width="1.600"/><path d="M931.300 612.800l9.900 10.200" stroke="#b4b4b4" stroke-width=".8"/>
<!-- database -->
<g fill="#b8b8b8">
<ellipse cx="954.800" cy="614.600" rx="4.400" ry="1.700"/>
<path d="M950.400 615.800q4.400 2.500 8.800 0v2.300q-4.400 2.500-8.800 0zM950.400 619.300q4.400 2.500 8.800 0v2.200q-4.400 2.500-8.800 0z"/>
</g>
<path d="M950.600 614.600l8.900 8.400" stroke="#191919" stroke-width="1.800"/><path d="M950.400 614.400l9.300 8.800" stroke="#b8b8b8" stroke-width=".8"/>
<!-- refresh -->
<g fill="none" stroke="#b8b8b8" stroke-width="1">
<path d="M968.700 617.500a4.200 4.200 0 0 1 7.400-2.400M977 618.500a4.200 4.200 0 0 1-7.400 2.400"/>
</g>
<path d="M977.400 613.300v2.900h-2.900zM968.300 622.700v-2.900h2.900z" fill="#b8b8b8"/>
<circle cx="972.800" cy="618" r="1.800" fill="#b8b8b8"/>
<path d="M968.600 613.200l8.700 9.700" stroke="#191919" stroke-width="1.800"/><path d="M968.400 613l9 10" stroke="#b8b8b8" stroke-width=".8"/>
<!-- check circle -->
<circle cx="990.400" cy="618" r="4.300" fill="none" stroke="#c0c0c0" stroke-width=".9"/>
<path d="M988.300 618.100l1.500 1.500l2.700-2.900" fill="none" stroke="#d0d0d0" stroke-width="1.100"/>

</svg>

<!-- ===== texts ===== -->
<span id="title" class="t b" style="left:475.32px;top:7.14px;font-size:13px;letter-spacing:0.365px;color:#bebebe;">SampleScene - ARCognition - Windows, Mac, Linux - Unity 2021.3.8f1 &lt;Metal&gt;</span>
<span id="signin" class="t" style="left:13.80px;top:36.45px;font-size:12.4px;letter-spacing:0.092px;color:#d0d0d0;">Sign in</span>
<span id="layers" class="t" style="left:1271.64px;top:36.74px;font-size:12.4px;letter-spacing:0.276px;color:#d0d0d0;">Layers</span>
<span id="default" class="t" style="left:1354.44px;top:36.74px;font-size:12.4px;letter-spacing:0.342px;color:#d0d0d0;">Default</span>
<span id="hier" class="t" style="left:22.44px;top:62.08px;font-size:12.4px;letter-spacing:0.336px;color:#d2d2d2;">Hierarchy</span>
<span id="all" class="t" style="left:61.32px;top:80.51px;font-size:12.4px;letter-spacing:0.089px;color:#6c6c6c;">All</span>
<span id="samplescene" class="t b" style="left:64.92px;top:99.28px;font-size:12px;letter-spacing:0.143px;color:#e6e6e6;">SampleScene</span>
<span id="maincam" class="t" style="left:77.88px;top:115.07px;font-size:12.4px;letter-spacing:0.079px;color:#cdcdcd;">Main Camera</span>
<span id="dirlight" class="t" style="left:77.88px;top:131.06px;font-size:12.4px;letter-spacing:0.224px;color:#cdcdcd;">Directional Light</span>
<span id="scene" class="t" style="left:297.19px;top:62.08px;font-size:12.4px;letter-spacing:0.249px;color:#d2d2d2;">Scene</span>
<span id="game" class="t" style="left:374.95px;top:62.08px;font-size:12.4px;letter-spacing:0.123px;color:#c4c4c4;">Game</span>
<span id="twod" class="t b" style="left:847.27px;top:84.21px;font-size:11.6px;letter-spacing:-0.724px;color:#e0e0e0;">2D</span>
<span id="persp" class="t" style="left:1031.88px;top:199.02px;font-size:12.4px;letter-spacing:0.076px;color:rgba(225,225,225,.75);">Persp</span>
<span id="gx" class="t" style="left:1007.98px;top:162.05px;font-size:11px;letter-spacing:0.972px;color:#f4f4f4;-webkit-text-stroke:.35px currentColor">x</span>
<span id="gy" class="t" style="left:1040.52px;top:112.51px;font-size:11px;letter-spacing:1.260px;color:rgba(255,255,255,.5);">y</span>
<span id="gz" class="t" style="left:1074.22px;top:162.05px;font-size:11px;letter-spacing:1.116px;color:#f4f4f4;-webkit-text-stroke:.35px currentColor">z</span>
<span id="inspector" class="t" style="left:1124.76px;top:62.08px;font-size:12.4px;letter-spacing:0.324px;color:#d2d2d2;">Inspector</span>
<span id="project" class="t" style="left:22.44px;top:549.09px;font-size:12.4px;letter-spacing:0.457px;color:#d2d2d2;">Project</span>
<span id="console" class="t" style="left:104.52px;top:549.09px;font-size:12.4px;letter-spacing:0.149px;color:#c4c4c4;">Console</span>
<span id="favorites" class="t b" style="left:34.68px;top:586.72px;font-size:12px;letter-spacing:0.205px;color:#d8d8d8;">Favorites</span>
<span id="assets" class="t b" style="left:34.68px;top:617.68px;font-size:12px;letter-spacing:0.536px;color:#e2e2e2;">Assets</span>
<span id="scenes" class="t" style="left:47.64px;top:633.33px;font-size:12.4px;letter-spacing:0.283px;color:#cdcdcd;">Scenes</span>
<span id="packages" class="t b" style="left:34.68px;top:649.65px;font-size:12px;letter-spacing:0.356px;color:#d8d8d8;">Packages</span>
<span id="crumb" class="t b" style="left:211.80px;top:588.88px;font-size:12px;letter-spacing:0.536px;color:#d8d8d8;">Assets</span>
<span id="sceneslbl" class="t" style="left:236.57px;top:683.60px;font-size:10px;letter-spacing:0.584px;color:#bdbdbd;">Scenes</span>
<span id="sixteen" class="t" style="left:1082.14px;top:567.66px;font-size:12.4px;letter-spacing:-0.989px;color:#c8c8c8;">16</span>

<div id="frame"></div>
</div>
</body>
</html>
